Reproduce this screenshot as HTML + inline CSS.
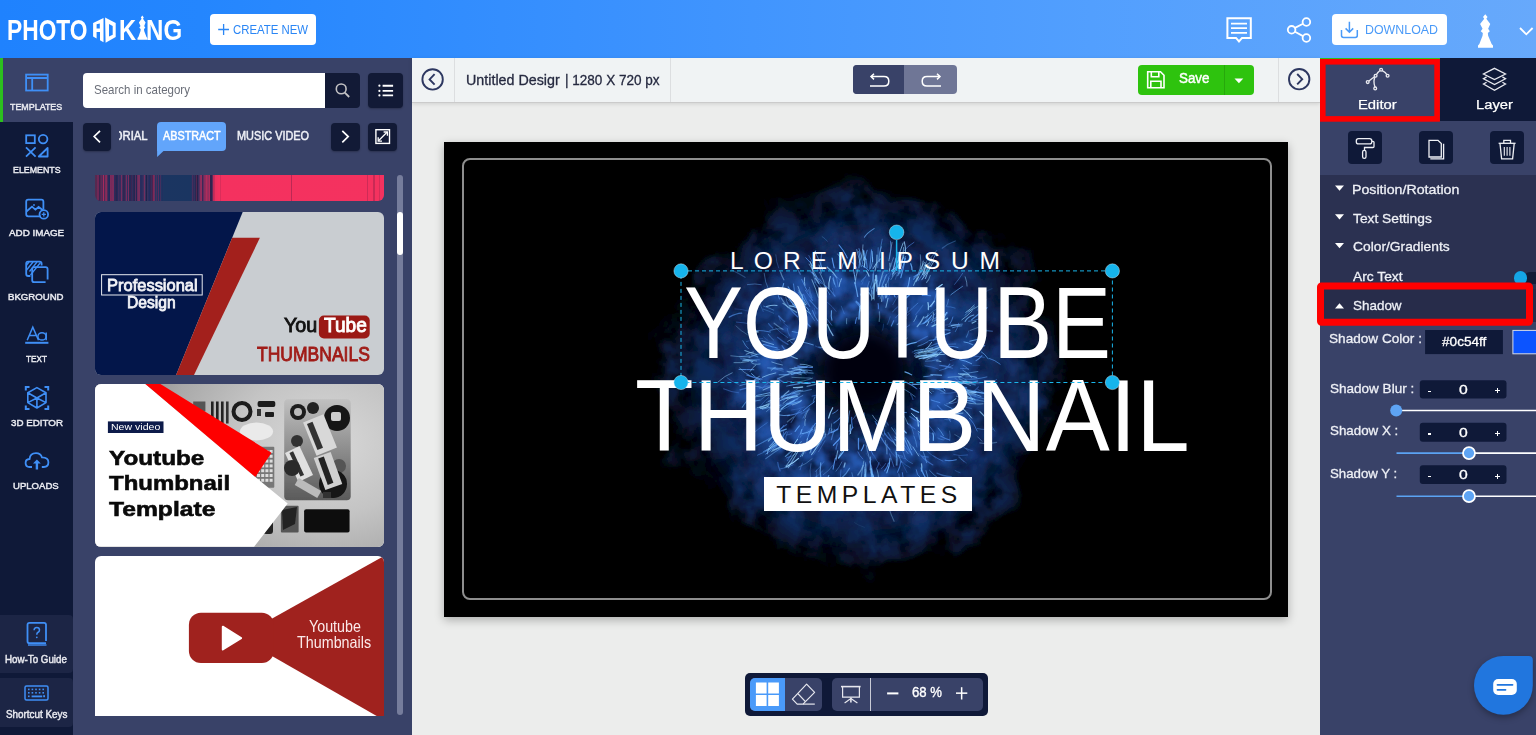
<!DOCTYPE html><html><head><meta charset="utf-8"><style>
*{box-sizing:border-box;margin:0;padding:0}
html,body{width:1536px;height:735px;overflow:hidden;font-family:"Liberation Sans",sans-serif;background:#ebeced}
.abs{position:absolute}
.t{white-space:nowrap;line-height:1}
svg{position:absolute;overflow:visible}
</style></head><body>
<div class="abs" style="left:0;top:0;width:1536px;height:58px;background:linear-gradient(90deg,#1f82fe 0%,#2486fe 13%,#3a91fe 40%,#529ffe 71%,#67a9fb 100%)"></div>
<div class="abs t" style="left:7.48px;top:14.65px;font-size:30.09px;font-weight:700;color:#fff;letter-spacing:0px;transform:scaleX(0.7569);transform-origin:0 0;">PHOTO</div>
<svg style="left:0;top:0" width="1536" height="58"><g fill="#fff"><path fill-rule="evenodd" d="M93.1 23.1 L103.5 18 L103.5 42.3 L100 40.2 L100 32 L96.6 32 L96.6 38.6 L93.1 36.5 Z M96.6 24.2 L99.8 23.6 L99.8 28.5 L96.6 28.5 Z"/><path fill-rule="evenodd" d="M105.1 17.5 L115.7 23.1 L115.7 37 L105.6 42.8 Z M109 24 L112.7 25.9 L112.7 34.7 L109 36.5 Z"/><path fill="#fff" d="M142.30 15.50 L143.80 17.50 L143.00 18.80 L145.60 22.60 L144.20 25.90 L145.30 27.70 L144.00 29.00 L144.20 31.00 L146.50 37.00 L147.40 38.00 L147.40 39.70 L137.50 39.70 L137.50 38.00 L138.40 37.00 L140.50 31.00 L140.70 29.00 L139.30 27.70 L140.50 25.90 L138.90 22.60 L141.60 18.80 L140.80 17.50 Z"/></g></svg>
<div class="abs t" style="left:118.72px;top:14.55px;font-size:29.51px;font-weight:700;color:#fff;letter-spacing:0px;transform:scaleX(0.8027);transform-origin:0 0;">K</div>
<div class="abs t" style="left:146.39px;top:14.55px;font-size:29.51px;font-weight:700;color:#fff;letter-spacing:0px;transform:scaleX(0.8157);transform-origin:0 0;">NG</div>
<div class="abs" style="left:210px;top:14px;width:106px;height:31px;background:#fff;border-radius:4px"></div>
<svg style="left:0;top:0" width="400" height="58"><path d="M223.6 24 V35 M218.2 29.5 H229" stroke="#2a86f5" stroke-width="1.3"/></svg>
<div class="abs t" style="left:232.82px;top:23.73px;font-size:12.94px;font-weight:400;color:#2a86f5;letter-spacing:0px;transform:scaleX(0.8808);transform-origin:0 0;">CREATE NEW</div>
<svg style="left:0;top:0" width="1536" height="58"><g fill="none" stroke="#fff" stroke-width="2"><path d="M1227.4 18.3 H1250.8 V37.9 H1242 L1239 41.4 L1236 37.9 H1227.4 Z"/><path d="M1231 23.7 H1247 M1231 28.1 H1247 M1231 32.8 H1247" stroke-width="1.7"/><circle cx="1306.4" cy="22" r="3.8" stroke-width="1.8"/><circle cx="1291.6" cy="29.8" r="3.8" stroke-width="1.8"/><circle cx="1306.4" cy="38" r="3.8" stroke-width="1.8"/><path d="M1295 27.9 L1303 23.8 M1295 31.8 L1303 36.1" stroke-width="1.8"/><path d="M1520 28 L1526.3 34.3 L1532.6 28" stroke-width="1.8"/></g></svg>
<div class="abs" style="left:1332px;top:14px;width:115px;height:31px;background:#fff;border-radius:4px"></div>
<svg style="left:0;top:0" width="1536" height="58"><g fill="none" stroke="#4a9af8" stroke-width="1.5"><path d="M1349.4 21.7 V32 M1345.6 28.4 L1349.4 32.2 L1353.2 28.4"/><path d="M1341.5 30 V35.5 Q1341.5 37.4 1343.5 37.4 H1355.3 Q1357.3 37.4 1357.3 35.5 V30"/></g><path fill="#fff" d="M1485.27 14.20 L1487.55 16.98 L1486.33 18.78 L1490.27 24.06 L1488.15 28.64 L1489.82 31.14 L1487.85 32.94 L1488.15 35.72 L1491.64 44.05 L1493.00 45.44 L1493.00 47.80 L1478.00 47.80 L1478.00 45.44 L1479.36 44.05 L1482.55 35.72 L1482.85 32.94 L1480.73 31.14 L1482.55 28.64 L1480.12 24.06 L1484.21 18.78 L1483.00 16.98 Z"/></svg>
<div class="abs t" style="left:1365.18px;top:24.03px;font-size:12.94px;font-weight:400;color:#4a9af8;letter-spacing:0px;transform:scaleX(0.9584);transform-origin:0 0;">DOWNLOAD</div>
<div class="abs" style="left:0;top:58px;width:73px;height:677px;background:#0f1938"></div>
<div class="abs" style="left:0;top:58px;width:73px;height:64px;background:#394268"></div>
<div class="abs" style="left:0;top:58px;width:3px;height:64px;background:#2cc01e"></div>
<div class="abs" style="left:0;top:615px;width:73px;height:58px;background:#1c2545;border-radius:0 4px 4px 0"></div>
<div class="abs" style="left:0;top:678px;width:73px;height:49px;background:#1c2545;border-radius:0 4px 4px 0"></div>
<svg style="left:0;top:0" width="80" height="735"><g fill="none" stroke="#3f8ff6" stroke-width="1.8"><rect x="26.1" y="74.6" width="21.6" height="15.9"/><path d="M26.1 78 H47.7 M32.2 78 V90.5"/><rect x="26.2" y="135.3" width="8.6" height="7.8"/><circle cx="43.1" cy="139.1" r="4.3"/><path d="M26 147.3 L35.6 156.6 M35.6 147.3 L26 156.6"/><path d="M47.6 148 V156.5 H38.8 Z" stroke-linejoin="round"/><path d="M41 216.3 H28.2 Q26.2 216.3 26.2 214.3 V201.7 Q26.2 199.7 28.2 199.7 H41.4 Q43.4 199.7 43.4 201.7 V209.6"/><path d="M26.4 211.5 L32 206.6 L35.4 209.6 L38.6 207 L43 210.2" /><circle cx="34" cy="205" r="0.9" fill="#3f8ff6" stroke="none"/><circle cx="43.8" cy="214.4" r="4.3"/><path d="M43.8 212.3 V216.5 M41.7 214.4 H45.9" stroke-width="1.3"/><path d="M41.6 265.4 V263.6 Q41.6 261.6 39.6 261.6 H28.2 Q26.2 261.6 26.2 263.6 V274 Q26.2 276 28.2 276 H30.4"/><path d="M29 262 L26.6 265 M33 262 L26.6 270 M37 262 L29.5 271.5 M40.5 262.5 L30.5 275" stroke-width="1.3"/><path d="M47.6 279.5 V269.2 Q47.6 267.2 45.6 267.2 H34.2 Q32.2 267.2 32.2 269.2 V280.2 Q32.2 282.2 34.2 282.2 H45.6"/><path d="M27.2 340.2 L32.8 327.2 L38.5 340.2 M29.3 335.4 H36.3" stroke-width="1.5"/><ellipse cx="42" cy="336.4" rx="4.1" ry="3.7" stroke-width="1.5"/><path d="M46.2 332.6 V340.2" stroke-width="1.5"/><path d="M25.2 342.8 H48.4" stroke-width="2"/><path d="M25.8 390.5 V387 H29.5 M44.5 387 H48.2 V390.5 M48.2 405.5 V409 H44.5 M29.5 409 H25.8 V405.5" stroke-width="2"/><path d="M36.9 387.6 L46 392.8 V402.6 L36.9 408 L27.8 402.6 V392.8 Z M27.8 392.8 L36.9 398 L46 392.8 M36.9 398 V408 M27.8 402.6 L36.9 398 L46 402.6" stroke-width="1.6" stroke-linejoin="round"/><path d="M32 467 H29.5 Q25.6 467 25.6 463 Q25.6 459.2 29.6 459 Q30 453.2 36 453.2 Q40.7 453.2 42 457.4 Q48.4 457.6 48.4 462.3 Q48.4 467 43.8 467 H41.8" stroke-width="1.8"/><path d="M36.9 469.5 V462.5" stroke-width="2.4"/><path d="M33 463.6 L36.9 459.5 L40.8 463.6 Z" fill="#3f8ff6" stroke="none"/><path d="M46 643.2 H29.5 Q27.5 643.2 27.5 641.2 V624.8 Q27.5 622.8 29.5 622.8 H44 Q46 622.8 46 624.8 V641" stroke-width="1.8"/><path d="M28 645 H46.5" stroke-width="1.4"/><path d="M34.1 630.3 Q34.1 627.4 36.8 627.4 Q39.5 627.4 39.5 630 Q39.5 631.7 37.8 632.5 Q36.8 633.1 36.8 634.7" stroke-width="1.5"/><circle cx="36.8" cy="637.3" r="0.9" fill="#3f8ff6" stroke="none"/><rect x="25" y="686.1" width="23" height="13.8" rx="1.5" stroke-width="1.5"/></g><g fill="#3f8ff6"><rect x="28.0" y="688.6" width="1.6" height="1.6"/><rect x="31.6" y="688.6" width="1.6" height="1.6"/><rect x="35.2" y="688.6" width="1.6" height="1.6"/><rect x="38.8" y="688.6" width="1.6" height="1.6"/><rect x="42.4" y="688.6" width="1.6" height="1.6"/><rect x="28.0" y="692.0" width="1.6" height="1.6"/><rect x="31.6" y="692.0" width="1.6" height="1.6"/><rect x="35.2" y="692.0" width="1.6" height="1.6"/><rect x="38.8" y="692.0" width="1.6" height="1.6"/><rect x="42.4" y="692.0" width="1.6" height="1.6"/><rect x="28" y="695.5" width="1.6" height="1.6"/><rect x="31.6" y="695.5" width="10.6" height="1.8"/><rect x="43.2" y="695.2" width="1.8" height="2"/></g></svg>
<div class="abs t" style="left:10.40px;top:102.45px;font-size:9.59px;font-weight:400;color:#e9eaf0;letter-spacing:0px;transform:scaleX(0.9286);transform-origin:0 0;-webkit-text-stroke:0.45px #e9eaf0;">TEMPLATES</div>
<div class="abs t" style="left:12.58px;top:165.20px;font-size:9.74px;font-weight:400;color:#e9eaf0;letter-spacing:0px;transform:scaleX(0.9054);transform-origin:0 0;-webkit-text-stroke:0.45px #e9eaf0;">ELEMENTS</div>
<div class="abs t" style="left:8.78px;top:228.25px;font-size:9.59px;font-weight:400;color:#e9eaf0;letter-spacing:0px;transform:scaleX(1.0261);transform-origin:0 0;-webkit-text-stroke:0.45px #e9eaf0;">ADD IMAGE</div>
<div class="abs t" style="left:8.41px;top:291.55px;font-size:9.59px;font-weight:400;color:#e9eaf0;letter-spacing:0px;transform:scaleX(1.0039);transform-origin:0 0;-webkit-text-stroke:0.45px #e9eaf0;">BKGROUND</div>
<div class="abs t" style="left:26.02px;top:354.45px;font-size:9.88px;font-weight:400;color:#e9eaf0;letter-spacing:0px;transform:scaleX(0.8303);transform-origin:0 0;-webkit-text-stroke:0.45px #e9eaf0;">TEXT</div>
<div class="abs t" style="left:10.63px;top:417.65px;font-size:9.88px;font-weight:400;color:#e9eaf0;letter-spacing:0px;transform:scaleX(0.9902);transform-origin:0 0;-webkit-text-stroke:0.45px #e9eaf0;">3D EDITOR</div>
<div class="abs t" style="left:13.36px;top:480.75px;font-size:9.59px;font-weight:400;color:#e9eaf0;letter-spacing:0px;transform:scaleX(0.9985);transform-origin:0 0;-webkit-text-stroke:0.45px #e9eaf0;">UPLOADS</div>
<div class="abs t" style="left:5.40px;top:654.48px;font-size:10.76px;font-weight:400;color:#e9eaf0;letter-spacing:0px;transform:scaleX(0.9088);transform-origin:0 0;-webkit-text-stroke:0.45px #e9eaf0;">How-To Guide</div>
<div class="abs t" style="left:5.75px;top:709.38px;font-size:10.76px;font-weight:400;color:#e9eaf0;letter-spacing:0px;transform:scaleX(0.9186);transform-origin:0 0;-webkit-text-stroke:0.45px #e9eaf0;">Shortcut Keys</div>
<div class="abs" style="left:73px;top:58px;width:339px;height:677px;background:#394268"></div>
<div class="abs" style="left:82.5px;top:73px;width:243px;height:34.7px;background:#fff;border-radius:4px 0 0 4px"></div>
<div class="abs t" style="left:93.78px;top:85.08px;font-size:11.92px;font-weight:400;color:#6a6e78;letter-spacing:0px;transform:scaleX(0.9665);transform-origin:0 0;">Search in category</div>
<div class="abs" style="left:325.4px;top:73px;width:34.6px;height:34.7px;background:#121a36;border-radius:0 4px 4px 0"></div>
<div class="abs" style="left:368px;top:73px;width:34.6px;height:34.7px;background:#121a36;border-radius:4px;box-shadow:0 1px 2px rgba(0,0,0,.25)"></div>
<div class="abs" style="left:83.1px;top:122.6px;width:27.9px;height:28.5px;background:#121a36;border-radius:4px;box-shadow:0 1px 2px rgba(0,0,0,.25)"></div>
<div class="abs" style="left:331.2px;top:122.6px;width:28.5px;height:28.5px;background:#121a36;border-radius:4px;box-shadow:0 1px 2px rgba(0,0,0,.25)"></div>
<div class="abs" style="left:368.0px;top:122.6px;width:28.8px;height:28.5px;background:#121a36;border-radius:4px;box-shadow:0 1px 2px rgba(0,0,0,.25)"></div>
<div class="abs" style="left:157.1px;top:122.2px;width:68.7px;height:29.3px;background:#62a5fb;border-radius:4px 4px 4px 0"></div>
<svg style="left:0;top:0" width="412" height="200"><path d="M157.1 151 V157 L163.5 151 Z" fill="#62a5fb"/><g fill="none" stroke="#fff" stroke-width="1.7"><path d="M100 130.8 L94.2 136.5 L100 142.3"/><path d="M342.3 130.8 L348.2 136.6 L342.3 142.4"/><rect x="375.9" y="129.7" width="13.6" height="13.7" stroke-width="1.4"/><path d="M378.5 140.8 L387 132.3" stroke-width="1.3"/><path d="M383.6 132 H387.4 V135.8 M378.2 137.3 V141.1 H382" stroke-width="1.3"/><circle cx="341.2" cy="88.9" r="4.9" stroke="#c3c2c4" stroke-width="1.6"/><path d="M344.8 92.6 L349.2 97" stroke="#c3c2c4" stroke-width="1.8"/><path d="M382.6 85.7 H393.1 M382.6 90.9 H393.1 M382.6 95.4 H393.1" stroke-width="1.9"/></g><g fill="#fff"><circle cx="379.4" cy="85.7" r="1.1"/><circle cx="379.4" cy="90.9" r="1.1"/><circle cx="379.4" cy="95.4" r="1.1"/></g></svg>
<div class="abs" style="left:118.75px;top:120px;width:30px;height:30px;overflow:hidden"><div class="abs t" style="left:-27.09px;top:9.94px;font-size:12.40px;font-weight:400;color:#eef0f6;letter-spacing:0px;transform:scaleX(0.9103);transform-origin:0 0;-webkit-text-stroke:0.50px #eef0f6;">TUTORIAL</div></div>
<div class="abs t" style="left:163.28px;top:129.94px;font-size:12.40px;font-weight:400;color:#fff;letter-spacing:0px;transform:scaleX(0.8734);transform-origin:0 0;-webkit-text-stroke:0.50px #fff;">ABSTRACT</div>
<div class="abs t" style="left:236.61px;top:130.24px;font-size:12.40px;font-weight:400;color:#eef0f6;letter-spacing:0px;transform:scaleX(0.8796);transform-origin:0 0;-webkit-text-stroke:0.50px #eef0f6;">MUSIC VIDEO</div>
<div class="abs" style="left:396.9px;top:174.6px;width:6px;height:540.8px;background:#767d9c;border-radius:3px"></div>
<div class="abs" style="left:396.9px;top:212.3px;width:6px;height:42.6px;background:#fff;border-radius:3px"></div>
<div class="abs" style="left:95.1px;top:174.6px;width:289.1px;height:541.1px;overflow:hidden"><div class="abs" style="left:0;top:0;width:289.1px;height:26.7px;overflow:hidden;border-radius:0 0 6px 6px;background:linear-gradient(90deg,#56294f 0%,#4a2b58 5%,#3c2f5e 10%,#40305e 16%,#2a3461 21%,#1b3561 24%,#1a3561 33%,#3a2f5d 35%,#8a2c5b 38%,#e4315f 41%,#f4315f 43%,#f4325f 100%)"><div class="abs" style="left:3.4px;top:0;width:1.1px;height:27px;background:rgba(30,45,95,.45)"></div><div class="abs" style="left:13.4px;top:0;width:1.1px;height:27px;background:rgba(30,45,95,.45)"></div><div class="abs" style="left:44.9px;top:0;width:0.6px;height:27px;background:rgba(30,45,95,.45)"></div><div class="abs" style="left:1.5px;top:0;width:0.8px;height:27px;background:rgba(120,40,90,.4)"></div><div class="abs" style="left:21.5px;top:0;width:1.6px;height:27px;background:rgba(15,25,60,.35)"></div><div class="abs" style="left:18.8px;top:0;width:1.5px;height:27px;background:rgba(30,45,95,.45)"></div><div class="abs" style="left:15.6px;top:0;width:1.8px;height:27px;background:rgba(200,45,95,.4)"></div><div class="abs" style="left:24.7px;top:0;width:0.8px;height:27px;background:rgba(30,45,95,.45)"></div><div class="abs" style="left:102.9px;top:0;width:0.9px;height:27px;background:rgba(30,45,95,.45)"></div><div class="abs" style="left:63.6px;top:0;width:1.4px;height:27px;background:rgba(30,45,95,.45)"></div><div class="abs" style="left:21.4px;top:0;width:1.8px;height:27px;background:rgba(30,45,95,.45)"></div><div class="abs" style="left:114.1px;top:0;width:1.7px;height:27px;background:rgba(120,40,90,.4)"></div><div class="abs" style="left:2.5px;top:0;width:1.0px;height:27px;background:rgba(30,45,95,.45)"></div><div class="abs" style="left:31.1px;top:0;width:0.9px;height:27px;background:rgba(200,45,95,.4)"></div><div class="abs" style="left:7.8px;top:0;width:1.0px;height:27px;background:rgba(120,40,90,.4)"></div><div class="abs" style="left:56.7px;top:0;width:0.9px;height:27px;background:rgba(15,25,60,.35)"></div><div class="abs" style="left:55.8px;top:0;width:0.7px;height:27px;background:rgba(120,40,90,.4)"></div><div class="abs" style="left:115.1px;top:0;width:0.5px;height:27px;background:rgba(120,40,90,.4)"></div><div class="abs" style="left:99.7px;top:0;width:0.5px;height:27px;background:rgba(15,25,60,.35)"></div><div class="abs" style="left:43.2px;top:0;width:1.3px;height:27px;background:rgba(200,45,95,.4)"></div><div class="abs" style="left:53.4px;top:0;width:1.4px;height:27px;background:rgba(30,45,95,.45)"></div><div class="abs" style="left:14.0px;top:0;width:0.8px;height:27px;background:rgba(15,25,60,.35)"></div><div class="abs" style="left:40.6px;top:0;width:1.0px;height:27px;background:rgba(120,40,90,.4)"></div><div class="abs" style="left:101.4px;top:0;width:0.5px;height:27px;background:rgba(200,45,95,.4)"></div><div class="abs" style="left:24.6px;top:0;width:1.2px;height:27px;background:rgba(120,40,90,.4)"></div><div class="abs" style="left:108.3px;top:0;width:0.9px;height:27px;background:rgba(200,45,95,.4)"></div><div class="abs" style="left:36.9px;top:0;width:0.9px;height:27px;background:rgba(30,45,95,.45)"></div><div class="abs" style="left:57.1px;top:0;width:1.4px;height:27px;background:rgba(200,45,95,.4)"></div><div class="abs" style="left:116.4px;top:0;width:1.2px;height:27px;background:rgba(15,25,60,.35)"></div><div class="abs" style="left:3.8px;top:0;width:1.5px;height:27px;background:rgba(120,40,90,.4)"></div><div class="abs" style="left:97.5px;top:0;width:1.1px;height:27px;background:rgba(15,25,60,.35)"></div><div class="abs" style="left:17.2px;top:0;width:1.8px;height:27px;background:rgba(200,45,95,.4)"></div><div class="abs" style="left:24.4px;top:0;width:1.8px;height:27px;background:rgba(30,45,95,.45)"></div><div class="abs" style="left:12.6px;top:0;width:1.1px;height:27px;background:rgba(30,45,95,.45)"></div><div class="abs" style="left:6.9px;top:0;width:1.0px;height:27px;background:rgba(30,45,95,.45)"></div><div class="abs" style="left:53.5px;top:0;width:1.8px;height:27px;background:rgba(30,45,95,.45)"></div><div class="abs" style="left:115.2px;top:0;width:1.1px;height:27px;background:rgba(15,25,60,.35)"></div><div class="abs" style="left:32.3px;top:0;width:1.1px;height:27px;background:rgba(30,45,95,.45)"></div><div class="abs" style="left:13.3px;top:0;width:1.6px;height:27px;background:rgba(30,45,95,.45)"></div><div class="abs" style="left:39.9px;top:0;width:0.6px;height:27px;background:rgba(120,40,90,.4)"></div><div class="abs" style="left:60.8px;top:0;width:1.2px;height:27px;background:rgba(120,40,90,.4)"></div><div class="abs" style="left:7.4px;top:0;width:1.5px;height:27px;background:rgba(120,40,90,.4)"></div><div class="abs" style="left:57.3px;top:0;width:1.5px;height:27px;background:rgba(120,40,90,.4)"></div><div class="abs" style="left:112.9px;top:0;width:0.9px;height:27px;background:rgba(30,45,95,.45)"></div><div class="abs" style="left:64.5px;top:0;width:0.8px;height:27px;background:rgba(120,40,90,.4)"></div><div class="abs" style="left:54.6px;top:0;width:1.6px;height:27px;background:rgba(120,40,90,.4)"></div><div class="abs" style="left:41.1px;top:0;width:1.3px;height:27px;background:rgba(15,25,60,.35)"></div><div class="abs" style="left:41.3px;top:0;width:1.6px;height:27px;background:rgba(15,25,60,.35)"></div><div class="abs" style="left:115.2px;top:0;width:1.7px;height:27px;background:rgba(30,45,95,.45)"></div><div class="abs" style="left:62.5px;top:0;width:0.7px;height:27px;background:rgba(120,40,90,.4)"></div><div class="abs" style="left:110.6px;top:0;width:1.1px;height:27px;background:rgba(200,45,95,.4)"></div><div class="abs" style="left:20.3px;top:0;width:1.5px;height:27px;background:rgba(15,25,60,.35)"></div><div class="abs" style="left:35.7px;top:0;width:1.2px;height:27px;background:rgba(120,40,90,.4)"></div><div class="abs" style="left:18.9px;top:0;width:1.1px;height:27px;background:rgba(30,45,95,.45)"></div><div class="abs" style="left:25.8px;top:0;width:1.4px;height:27px;background:rgba(200,45,95,.4)"></div><div class="abs" style="left:116.4px;top:0;width:1.8px;height:27px;background:rgba(30,45,95,.45)"></div><div class="abs" style="left:6.4px;top:0;width:0.7px;height:27px;background:rgba(120,40,90,.4)"></div><div class="abs" style="left:114.2px;top:0;width:1.1px;height:27px;background:rgba(200,45,95,.4)"></div><div class="abs" style="left:49.0px;top:0;width:1.0px;height:27px;background:rgba(200,45,95,.4)"></div><div class="abs" style="left:106.6px;top:0;width:0.5px;height:27px;background:rgba(15,25,60,.35)"></div><div class="abs" style="left:112.3px;top:0;width:1.6px;height:27px;background:rgba(200,45,95,.4)"></div><div class="abs" style="left:113.8px;top:0;width:1.2px;height:27px;background:rgba(120,40,90,.4)"></div><div class="abs" style="left:11.2px;top:0;width:1.2px;height:27px;background:rgba(120,40,90,.4)"></div><div class="abs" style="left:112.2px;top:0;width:0.9px;height:27px;background:rgba(120,40,90,.4)"></div><div class="abs" style="left:96.6px;top:0;width:1.0px;height:27px;background:rgba(120,40,90,.4)"></div><div class="abs" style="left:55.2px;top:0;width:0.7px;height:27px;background:rgba(15,25,60,.35)"></div><div class="abs" style="left:66.5px;top:0;width:1.7px;height:27px;background:rgba(30,45,95,.45)"></div><div class="abs" style="left:105.4px;top:0;width:0.5px;height:27px;background:rgba(200,45,95,.4)"></div><div class="abs" style="left:38.5px;top:0;width:1.7px;height:27px;background:rgba(30,45,95,.45)"></div><div class="abs" style="left:38.4px;top:0;width:1.6px;height:27px;background:rgba(15,25,60,.35)"></div><div class="abs" style="left:50.6px;top:0;width:1.8px;height:27px;background:rgba(15,25,60,.35)"></div><div class="abs" style="left:34.4px;top:0;width:1.8px;height:27px;background:rgba(15,25,60,.35)"></div><div class="abs" style="left:45.3px;top:0;width:1.6px;height:27px;background:rgba(30,45,95,.45)"></div><div class="abs" style="left:115.8px;top:0;width:1.1px;height:27px;background:rgba(15,25,60,.35)"></div><div class="abs" style="left:2.3px;top:0;width:1.7px;height:27px;background:rgba(120,40,90,.4)"></div><div class="abs" style="left:58.0px;top:0;width:0.9px;height:27px;background:rgba(15,25,60,.35)"></div><div class="abs" style="left:2.8px;top:0;width:1.4px;height:27px;background:rgba(15,25,60,.35)"></div><div class="abs" style="left:29.0px;top:0;width:0.6px;height:27px;background:rgba(30,45,95,.45)"></div><div class="abs" style="left:97.6px;top:0;width:0.5px;height:27px;background:rgba(120,40,90,.4)"></div><div class="abs" style="left:28.7px;top:0;width:1.1px;height:27px;background:rgba(200,45,95,.4)"></div><div class="abs" style="left:29.0px;top:0;width:0.8px;height:27px;background:rgba(30,45,95,.45)"></div><div class="abs" style="left:58.1px;top:0;width:1.8px;height:27px;background:rgba(200,45,95,.4)"></div><div class="abs" style="left:1.9px;top:0;width:0.7px;height:27px;background:rgba(120,40,90,.4)"></div><div class="abs" style="left:63.0px;top:0;width:0.9px;height:27px;background:rgba(120,40,90,.4)"></div><div class="abs" style="left:41.3px;top:0;width:1.4px;height:27px;background:rgba(30,45,95,.45)"></div><div class="abs" style="left:4.3px;top:0;width:0.8px;height:27px;background:rgba(15,25,60,.35)"></div><div class="abs" style="left:50.7px;top:0;width:1.5px;height:27px;background:rgba(15,25,60,.35)"></div><div class="abs" style="left:101.3px;top:0;width:1.6px;height:27px;background:rgba(15,25,60,.35)"></div><div class="abs" style="left:46.2px;top:0;width:1.6px;height:27px;background:rgba(30,45,95,.45)"></div><div class="abs" style="left:106.1px;top:0;width:1.1px;height:27px;background:rgba(200,45,95,.4)"></div><div class="abs" style="left:35.8px;top:0;width:0.5px;height:27px;background:rgba(15,25,60,.35)"></div><div class="abs" style="left:55.7px;top:0;width:0.9px;height:27px;background:rgba(30,45,95,.45)"></div><div class="abs" style="left:56.5px;top:0;width:1.2px;height:27px;background:rgba(15,25,60,.35)"></div><div class="abs" style="left:114.8px;top:0;width:1.2px;height:27px;background:rgba(15,25,60,.35)"></div><div class="abs" style="left:8.1px;top:0;width:0.8px;height:27px;background:rgba(200,45,95,.4)"></div><div class="abs" style="left:3.0px;top:0;width:1.4px;height:27px;background:rgba(200,45,95,.4)"></div><div class="abs" style="left:117.8px;top:0;width:1.4px;height:27px;background:rgba(200,45,95,.4)"></div><div class="abs" style="left:14.6px;top:0;width:0.7px;height:27px;background:rgba(200,45,95,.4)"></div><div class="abs" style="left:34.5px;top:0;width:1.7px;height:27px;background:rgba(30,45,95,.45)"></div><div class="abs" style="left:21.6px;top:0;width:0.7px;height:27px;background:rgba(30,45,95,.45)"></div><div class="abs" style="left:7.9px;top:0;width:0.8px;height:27px;background:rgba(200,45,95,.4)"></div><div class="abs" style="left:33.0px;top:0;width:1.2px;height:27px;background:rgba(200,45,95,.4)"></div><div class="abs" style="left:15.9px;top:0;width:1.1px;height:27px;background:rgba(120,40,90,.4)"></div><div class="abs" style="left:41.7px;top:0;width:1.4px;height:27px;background:rgba(200,45,95,.4)"></div><div class="abs" style="left:16.3px;top:0;width:0.9px;height:27px;background:rgba(120,40,90,.4)"></div><div class="abs" style="left:107.4px;top:0;width:1.2px;height:27px;background:rgba(30,45,95,.45)"></div><div class="abs" style="left:31.1px;top:0;width:1.2px;height:27px;background:rgba(120,40,90,.4)"></div><div class="abs" style="left:98.2px;top:0;width:0.9px;height:27px;background:rgba(30,45,95,.45)"></div><div class="abs" style="left:53.5px;top:0;width:1.0px;height:27px;background:rgba(30,45,95,.45)"></div><div class="abs" style="left:10.1px;top:0;width:1.4px;height:27px;background:rgba(200,45,95,.4)"></div><div class="abs" style="left:101.9px;top:0;width:1.2px;height:27px;background:rgba(15,25,60,.35)"></div><div class="abs" style="left:28.2px;top:0;width:1.6px;height:27px;background:rgba(15,25,60,.35)"></div><div class="abs" style="left:113.7px;top:0;width:0.6px;height:27px;background:rgba(200,45,95,.4)"></div><div class="abs" style="left:118.0px;top:0;width:1.5px;height:27px;background:rgba(120,30,70,0.25)"></div><div class="abs" style="left:125.0px;top:0;width:1.0px;height:27px;background:rgba(120,30,70,0.20)"></div><div class="abs" style="left:195.5px;top:0;width:1.6px;height:27px;background:rgba(120,30,70,0.45)"></div><div class="abs" style="left:272.0px;top:0;width:1.2px;height:27px;background:rgba(120,30,70,0.30)"></div><div class="abs" style="left:278.0px;top:0;width:2.0px;height:27px;background:rgba(120,30,70,0.35)"></div><div class="abs" style="left:284.0px;top:0;width:1.0px;height:27px;background:rgba(120,30,70,0.25)"></div></div><div class="abs" style="left:0;top:37.0px;width:289.1px;height:163px;border-radius:6px;overflow:hidden;background:#c9cdd1"><svg style="left:0;top:0" width="289" height="163"><path d="M0 0 H147.7 L81.1 163 H0 Z" fill="#03164a"/><path d="M137.2 25.8 H164.9 L99.0 163 H81.1 Z" fill="#a3201c"/><rect x="6.6" y="62.7" width="100.6" height="20.3" fill="none" stroke="#e8eaf0" stroke-width="1"/><rect x="223.9" y="103.6" width="50.8" height="22.8" rx="5" fill="#9b1915"/></svg><div class="abs t" style="left:12.05px;top:66.28px;font-size:16.72px;font-weight:400;color:#f2f3f7;letter-spacing:0px;transform:scaleX(0.9866);transform-origin:0 0;-webkit-text-stroke:0.80px #f2f3f7;">Professional</div><div class="abs t" style="left:31.71px;top:82.37px;font-size:16.13px;font-weight:400;color:#f2f3f7;letter-spacing:0px;transform:scaleX(0.9718);transform-origin:0 0;-webkit-text-stroke:0.80px #f2f3f7;">Design</div><div class="abs t" style="left:188.47px;top:103.75px;font-size:20.49px;font-weight:400;color:#111;letter-spacing:0px;transform:scaleX(0.9642);transform-origin:0 0;-webkit-text-stroke:0.90px #111;">You</div><div class="abs t" style="left:228.47px;top:103.75px;font-size:20.49px;font-weight:400;color:#fff;letter-spacing:0px;transform:scaleX(0.9331);transform-origin:0 0;-webkit-text-stroke:0.90px #fff;">Tube</div><div class="abs t" style="left:161.71px;top:132.15px;font-size:20.49px;font-weight:400;color:#a01c18;letter-spacing:0px;transform:scaleX(0.8547);transform-origin:0 0;-webkit-text-stroke:0.90px #a01c18;">THUMBNAILS</div></div><div class="abs" style="left:0;top:209.6px;width:289.1px;height:162.8px;border-radius:6px;overflow:hidden;background:#fff"><div class="abs" style="left:0;top:0;width:289.1px;height:162.8px;background:radial-gradient(ellipse 200px 160px at 230px 60px,#d9d9d9 0%,#c4c4c4 45%,#a9a9a9 80%,#8f8f8f 100%)"></div><svg style="left:0;top:0" width="289" height="163"><defs><linearGradient id="lap" x1="0" y1="0" x2="0" y2="1"><stop offset="0" stop-color="#c0c0c0"/><stop offset="1" stop-color="#5a5a5a"/></linearGradient><filter id="pb"><feGaussianBlur stdDeviation="0.7"/></filter></defs><g filter="url(#pb)"><rect x="189.2" y="15.3" width="66.5" height="101" rx="4" fill="url(#lap)"/><circle cx="203" cy="28" r="8" fill="#1a1a1a"/><circle cx="203" cy="28" r="4" fill="#bbb"/><circle cx="218" cy="24" r="6" fill="#222"/><circle cx="242" cy="34" r="13" fill="#151515"/><rect x="236" y="28" width="10" height="9" rx="2" fill="#ccc"/><rect x="214" y="33" width="22" height="36" fill="#d8d8d8" transform="rotate(-22 225 51)"/><rect x="217" y="36" width="6" height="28" fill="#333" transform="rotate(-22 225 51)"/><circle cx="202" cy="57" r="6" fill="#333"/><rect x="196" y="64" width="16" height="32" fill="#e0e0e0" transform="rotate(-25 204 80)"/><rect x="200" y="66" width="4" height="26" fill="#333" transform="rotate(-25 204 80)"/><circle cx="197" cy="84" r="8" fill="#2b2b2b"/><circle cx="244" cy="82" r="7" fill="#555"/><circle cx="238" cy="100" r="14" fill="#141414"/><rect x="224" y="70" width="18" height="34" fill="#d0d0d0" transform="rotate(-20 233 87)"/><rect x="228" y="72" width="6" height="28" fill="#222" transform="rotate(-20 233 87)"/><rect x="200" y="100" width="26" height="8" fill="#bbb" transform="rotate(30 213 104)"/><rect x="228" y="108" width="8" height="6" fill="#333"/><rect x="209.1" y="125.2" width="45.5" height="23.3" rx="2" fill="#111"/><rect x="185.9" y="121.8" width="17.7" height="26.7" rx="1" fill="#555"/><path d="M187 126 L202 123 L200 140 L188 146 Z" fill="#222"/><rect x="168" y="132" width="10" height="18" rx="3" fill="#222"/><rect x="160.3" y="62.8" width="19" height="41" rx="1" fill="#777"/><rect x="162.0" y="66.0" width="3" height="3" fill="#ddd"/><rect x="162.0" y="70.8" width="3" height="3" fill="#ddd"/><rect x="162.0" y="75.6" width="3" height="3" fill="#ddd"/><rect x="162.0" y="80.4" width="3" height="3" fill="#ddd"/><rect x="162.0" y="85.2" width="3" height="3" fill="#ddd"/><rect x="162.0" y="90.0" width="3" height="3" fill="#ddd"/><rect x="162.0" y="94.8" width="3" height="3" fill="#ddd"/><rect x="166.2" y="66.0" width="3" height="3" fill="#ddd"/><rect x="166.2" y="70.8" width="3" height="3" fill="#ddd"/><rect x="166.2" y="75.6" width="3" height="3" fill="#ddd"/><rect x="166.2" y="80.4" width="3" height="3" fill="#ddd"/><rect x="166.2" y="85.2" width="3" height="3" fill="#ddd"/><rect x="166.2" y="90.0" width="3" height="3" fill="#ddd"/><rect x="166.2" y="94.8" width="3" height="3" fill="#ddd"/><rect x="170.4" y="66.0" width="3" height="3" fill="#ddd"/><rect x="170.4" y="70.8" width="3" height="3" fill="#ddd"/><rect x="170.4" y="75.6" width="3" height="3" fill="#ddd"/><rect x="170.4" y="80.4" width="3" height="3" fill="#ddd"/><rect x="170.4" y="85.2" width="3" height="3" fill="#ddd"/><rect x="170.4" y="90.0" width="3" height="3" fill="#ddd"/><rect x="170.4" y="94.8" width="3" height="3" fill="#ddd"/><rect x="174.6" y="66.0" width="3" height="3" fill="#ddd"/><rect x="174.6" y="70.8" width="3" height="3" fill="#ddd"/><rect x="174.6" y="75.6" width="3" height="3" fill="#ddd"/><rect x="174.6" y="80.4" width="3" height="3" fill="#ddd"/><rect x="174.6" y="85.2" width="3" height="3" fill="#ddd"/><rect x="174.6" y="90.0" width="3" height="3" fill="#ddd"/><rect x="174.6" y="94.8" width="3" height="3" fill="#ddd"/><ellipse cx="161.5" cy="47.5" rx="16.6" ry="8.9" fill="#eaeaea"/><rect x="116" y="17.5" width="2.6" height="22" fill="#222"/><rect x="121" y="17.5" width="2.6" height="22" fill="#222"/><rect x="126" y="17.5" width="2.6" height="22" fill="#222"/><rect x="131" y="17.5" width="2.6" height="22" fill="#333"/><circle cx="147" cy="27.5" r="8.5" fill="none" stroke="#1a1a1a" stroke-width="4"/><rect x="162.6" y="17" width="17.7" height="6" rx="2" fill="#1a1a1a"/><rect x="170" y="28" width="9" height="5" rx="1" fill="#1a1a1a"/><rect x="162" y="25" width="4" height="7" fill="#333"/><rect x="98.2" y="17.5" width="12.2" height="10" fill="#555"/></g><path d="M0 0 H50.4 L160.3 93.0 L192.7 119.6 L159.1 162.8 H0 Z" fill="#fff"/><path d="M50.4 0 H65.4 L176.5 68.7 L160.3 93.0 Z" fill="#fe0000"/><rect x="12.9" y="37.4" width="55.6" height="11.6" fill="#0d1b4a"/></svg><div class="abs t" style="left:15.83px;top:39.25px;font-size:9.01px;font-weight:400;color:#fff;letter-spacing:0px;transform:scaleX(1.1719);transform-origin:0 0;">New video</div><div class="abs t" style="left:14.18px;top:62.58px;font-size:21.08px;font-weight:700;color:#0a0a0a;letter-spacing:0px;transform:scaleX(1.1525);transform-origin:0 0;-webkit-text-stroke:0.60px #0a0a0a;">Youtube</div><div class="abs t" style="left:14.33px;top:87.98px;font-size:21.08px;font-weight:700;color:#0a0a0a;letter-spacing:0px;transform:scaleX(1.1363);transform-origin:0 0;-webkit-text-stroke:0.60px #0a0a0a;">Thumbnail</div><div class="abs t" style="left:14.32px;top:113.38px;font-size:21.08px;font-weight:700;color:#0a0a0a;letter-spacing:0px;transform:scaleX(1.1688);transform-origin:0 0;-webkit-text-stroke:0.60px #0a0a0a;">Template</div></div><div class="abs" style="left:0;top:381.2px;width:289.1px;height:160px;border-radius:6px 6px 0 0;overflow:hidden;background:#fff"><svg style="left:0;top:0" width="289" height="160"><path d="M289.1 0 L166.9 68.2 L166.9 94.2 L281.7 160.0 L289.1 160.0 Z" fill="#a0221e"/><rect x="93.9" y="56.7" width="84.9" height="50.4" rx="12" fill="#a0221e"/><path d="M127.8 70.7 L146.1 82.1 L127.8 93.5 Z" fill="#fff" stroke="#fff" stroke-width="2" stroke-linejoin="round"/></svg><div class="abs t" style="left:213.89px;top:63.13px;font-size:15.70px;font-weight:400;color:#fbeaea;letter-spacing:0px;transform:scaleX(0.9089);transform-origin:0 0;">Youtube</div><div class="abs t" style="left:202.28px;top:77.72px;font-size:16.28px;font-weight:400;color:#fbeaea;letter-spacing:0px;transform:scaleX(0.8811);transform-origin:0 0;">Thumbnails</div></div></div>
<div class="abs" style="left:412px;top:58px;width:908px;height:677px;background:#ecedec"></div>
<div class="abs" style="left:412px;top:58px;width:908px;height:45px;background:#f0f3f4;border-bottom:1px solid #cbcbcb;box-shadow:0 1px 4px rgba(0,0,0,.12)"></div>
<div class="abs" style="left:454px;top:58px;width:1px;height:44px;background:#dcdee0"></div>
<div class="abs" style="left:670px;top:58px;width:1px;height:44px;background:#dcdee0"></div>
<div class="abs" style="left:1278px;top:58px;width:1px;height:44px;background:#dcdee0"></div>
<svg style="left:0;top:0" width="1320" height="110"><g fill="none" stroke="#2d3760" stroke-width="1.9"><circle cx="432.6" cy="79.4" r="10.2"/><path d="M434.6 74.2 L429.6 79.4 L434.6 84.6"/><circle cx="1299.2" cy="79.2" r="10.2"/><path d="M1297.2 74 L1302.2 79.2 L1297.2 84.4"/></g></svg>
<div class="abs t" style="left:466.10px;top:74.23px;font-size:13.95px;font-weight:400;color:#262a40;letter-spacing:0px;transform:scaleX(1.0255);transform-origin:0 0;-webkit-text-stroke:0.30px #262a40;">Untitled Desigr</div>
<div class="abs t" style="left:565.29px;top:74.23px;font-size:13.95px;font-weight:400;color:#262a40;letter-spacing:0px;transform:scaleX(0.9708);transform-origin:0 0;-webkit-text-stroke:0.30px #262a40;">| 1280 X 720 px</div>
<div class="abs" style="left:852.8px;top:65.2px;width:104.6px;height:28.7px;background:#6f7696;border-radius:4px;overflow:hidden"><div class="abs" style="left:0;top:0;width:51px;height:28.7px;background:#394268"></div></div>
<svg style="left:0;top:0" width="1320" height="110"><g fill="none" stroke="#fff" stroke-width="1.5"><path d="M871.5 76.5 H884 Q888.8 76.5 888.8 81.2 Q888.8 86 884 86 H870"/><path d="M874 73.8 L871 76.6 L874 79.4"/><path d="M939.7 76.5 H927 Q922.2 76.5 922.2 81.2 Q922.2 86 927 86 H941"/><path d="M937 73.8 L940 76.6 L937 79.4"/></g></svg>
<div class="abs" style="left:1138.3px;top:64.6px;width:115.5px;height:30.3px;background:#2ec30e;border-radius:4px"></div>
<div class="abs" style="left:1224px;top:64.6px;width:1px;height:30.3px;background:#27a80c"></div>
<svg style="left:0;top:0" width="1320" height="110"><g fill="none" stroke="#fff" stroke-width="1.6"><path d="M1147.7 71.8 H1160.5 L1164 75.3 V87.7 H1147.7 Z"/><path d="M1151.3 72 V76.8 H1158.8 V72"/><path d="M1150.8 87.5 V81.3 H1161 V87.5"/></g><path d="M1234.5 78.5 H1243.3 L1238.9 83.2 Z" fill="#fff"/></svg>
<div class="abs t" style="left:1179.09px;top:71.25px;font-size:14.00px;font-weight:400;color:#fff;letter-spacing:0px;transform:scaleX(0.9559);transform-origin:0 0;-webkit-text-stroke:0.45px #fff;">Save</div>
<div class="abs" style="left:444.3px;top:142px;width:844px;height:475.2px;background:#000;box-shadow:0 3px 9px rgba(0,0,0,.28);overflow:hidden"><svg style="left:0;top:0" width="845" height="475"><defs><filter id="smoke" x="-40%" y="-40%" width="180%" height="180%"><feTurbulence type="fractalNoise" baseFrequency="0.016" numOctaves="3" seed="9" result="n1"/><feDisplacementMap in="SourceGraphic" in2="n1" scale="70" xChannelSelector="R" yChannelSelector="G" result="d"/><feTurbulence type="fractalNoise" baseFrequency="0.045" numOctaves="4" seed="3" result="n2"/><feColorMatrix in="n2" type="matrix" values="0 0 0 0 0  0 0 0 0 0  0 0 0 0 0  2.4 0 0 0 -0.6" result="m"/><feComposite in="d" in2="m" operator="in" result="dm"/><feGaussianBlur in="dm" stdDeviation="1.2"/></filter><filter id="smoke2" x="-40%" y="-40%" width="180%" height="180%"><feTurbulence type="fractalNoise" baseFrequency="0.03" numOctaves="3" seed="21" result="n1"/><feDisplacementMap in="SourceGraphic" in2="n1" scale="40" xChannelSelector="R" yChannelSelector="G" result="d"/><feTurbulence type="fractalNoise" baseFrequency="0.06" numOctaves="3" seed="17" result="n2"/><feColorMatrix in="n2" type="matrix" values="0 0 0 0 0  0 0 0 0 0  0 0 0 0 0  3 0 0 0 -1.1" result="m"/><feComposite in="d" in2="m" operator="in" result="dm"/><feGaussianBlur in="dm" stdDeviation="1"/></filter><filter id="blur6"><feGaussianBlur stdDeviation="7"/></filter><radialGradient id="rg1" cx="0.5" cy="0.5" r="0.5"><stop offset="0" stop-color="#03070f"/><stop offset="0.2" stop-color="#081630"/><stop offset="0.42" stop-color="#1a3f85"/><stop offset="0.62" stop-color="#163877"/><stop offset="0.8" stop-color="#0f2857"/><stop offset="0.93" stop-color="#081630"/><stop offset="1" stop-color="#000" stop-opacity="0"/></radialGradient><radialGradient id="rg0" cx="0.5" cy="0.5" r="0.5"><stop offset="0" stop-color="#02050c"/><stop offset="0.3" stop-color="#06112a"/><stop offset="0.6" stop-color="#0a1d45"/><stop offset="0.85" stop-color="#061230"/><stop offset="1" stop-color="#000" stop-opacity="0"/></radialGradient><radialGradient id="rg2" cx="0.5" cy="0.5" r="0.5"><stop offset="0" stop-color="#000" stop-opacity="0"/><stop offset="0.3" stop-color="#1a3f88" stop-opacity="0"/><stop offset="0.5" stop-color="#2c64c4"/><stop offset="0.75" stop-color="#2458b0"/><stop offset="1" stop-color="#000" stop-opacity="0"/></radialGradient></defs><ellipse cx="419.7" cy="236.0" rx="190" ry="186" fill="url(#rg0)" filter="url(#blur6)"/><g filter="url(#smoke)"><ellipse cx="419.7" cy="236.0" rx="205" ry="198" fill="url(#rg1)"/></g><g filter="url(#smoke2)" opacity="0.8"><ellipse cx="419.7" cy="236.0" rx="150" ry="145" fill="url(#rg2)"/></g><ellipse cx="419.7" cy="228.0" rx="40" ry="36" fill="#01040a" filter="url(#blur6)"/><g fill="none" stroke-linecap="round"><path d="M355.2 242.1 Q350.5 242.9 345.7 243.3" stroke="rgba(70,125,215,0.47)" stroke-width="1.04"/><path d="M447.2 128.8 Q449.1 126.8 453.0 125.3" stroke="rgba(110,180,255,0.80)" stroke-width="1.02"/><path d="M342.3 287.1 Q338.1 289.0 333.1 289.7" stroke="rgba(110,180,255,0.77)" stroke-width="1.18"/><path d="M543.4 279.9 Q547.7 283.4 550.9 289.1" stroke="rgba(85,150,240,0.37)" stroke-width="0.96"/><path d="M358.0 153.2 Q355.5 149.1 353.9 144.3" stroke="rgba(150,210,255,0.65)" stroke-width="0.88"/><path d="M329.5 197.9 Q326.6 195.8 324.3 192.3" stroke="rgba(110,180,255,0.68)" stroke-width="0.65"/><path d="M428.1 146.6 Q429.7 142.5 433.3 138.8" stroke="rgba(110,180,255,0.60)" stroke-width="1.19"/><path d="M518.9 228.3 Q523.5 230.4 527.8 235.7" stroke="rgba(110,180,255,0.61)" stroke-width="1.00"/><path d="M463.3 357.9 Q466.0 363.0 470.1 367.6" stroke="rgba(110,180,255,0.33)" stroke-width="1.27"/><path d="M424.7 128.8 Q423.0 126.2 418.5 123.6" stroke="rgba(85,150,240,0.87)" stroke-width="1.08"/><path d="M456.8 318.9 Q456.6 324.1 453.5 330.3" stroke="rgba(70,125,215,0.85)" stroke-width="1.05"/><path d="M472.8 275.7 Q474.4 279.2 474.4 284.1" stroke="rgba(150,210,255,0.87)" stroke-width="1.30"/><path d="M512.9 239.6 Q515.7 241.9 517.8 247.2" stroke="rgba(110,180,255,0.74)" stroke-width="0.63"/><path d="M469.9 293.9 Q472.2 298.9 472.9 305.0" stroke="rgba(110,180,255,0.60)" stroke-width="0.66"/><path d="M344.0 184.7 Q341.3 182.7 338.9 180.2" stroke="rgba(70,125,215,0.59)" stroke-width="0.69"/><path d="M340.8 179.8 Q337.6 177.2 334.7 174.0" stroke="rgba(85,150,240,0.55)" stroke-width="1.17"/><path d="M419.9 302.7 Q419.2 305.8 417.2 308.8" stroke="rgba(85,150,240,0.96)" stroke-width="1.08"/><path d="M361.4 277.3 Q360.5 279.8 360.9 283.5" stroke="rgba(150,210,255,0.68)" stroke-width="0.77"/><path d="M395.2 144.5 Q395.4 140.8 397.4 136.8" stroke="rgba(150,210,255,0.74)" stroke-width="0.96"/><path d="M508.5 185.7 Q513.0 184.3 517.8 183.8" stroke="rgba(110,180,255,0.75)" stroke-width="0.80"/><path d="M492.8 186.2 Q494.6 183.1 495.0 177.9" stroke="rgba(70,125,215,0.52)" stroke-width="0.77"/><path d="M496.4 251.1 Q503.9 251.8 511.9 250.1" stroke="rgba(70,125,215,0.44)" stroke-width="1.29"/><path d="M356.3 132.2 Q353.4 127.1 351.1 121.7" stroke="rgba(110,180,255,0.44)" stroke-width="1.25"/><path d="M347.6 239.5 Q345.4 239.6 343.1 239.2" stroke="rgba(110,180,255,0.40)" stroke-width="1.11"/><path d="M376.8 320.8 Q375.5 328.4 376.9 337.1" stroke="rgba(110,180,255,0.70)" stroke-width="1.23"/><path d="M413.7 154.5 Q412.7 147.5 410.8 140.6" stroke="rgba(110,180,255,0.80)" stroke-width="1.21"/><path d="M380.5 250.5 Q374.6 252.9 368.1 254.2" stroke="rgba(70,125,215,0.72)" stroke-width="0.87"/><path d="M514.8 235.5 Q517.5 234.7 520.3 232.5" stroke="rgba(150,210,255,0.62)" stroke-width="0.87"/><path d="M411.2 137.8 Q410.5 132.7 409.4 127.5" stroke="rgba(110,180,255,0.89)" stroke-width="0.96"/><path d="M337.8 220.5 Q335.9 218.7 334.3 214.6" stroke="rgba(70,125,215,0.42)" stroke-width="0.78"/><path d="M515.0 234.8 Q518.6 235.8 522.1 237.9" stroke="rgba(85,150,240,0.48)" stroke-width="1.13"/><path d="M358.5 321.2 Q357.0 324.2 356.1 327.6" stroke="rgba(70,125,215,0.51)" stroke-width="1.16"/><path d="M421.9 154.0 Q421.0 150.9 418.8 147.8" stroke="rgba(150,210,255,0.49)" stroke-width="0.75"/><path d="M456.7 269.8 Q459.0 270.7 462.4 270.6" stroke="rgba(85,150,240,0.99)" stroke-width="0.68"/><path d="M294.6 250.8 Q287.3 250.2 279.6 246.8" stroke="rgba(70,125,215,0.48)" stroke-width="1.07"/><path d="M397.8 126.0 Q398.4 122.0 401.2 117.7" stroke="rgba(110,180,255,0.53)" stroke-width="1.07"/><path d="M408.5 284.7 Q407.3 288.5 405.6 292.2" stroke="rgba(85,150,240,0.72)" stroke-width="0.88"/><path d="M452.2 310.1 Q453.5 316.3 452.9 323.2" stroke="rgba(110,180,255,0.99)" stroke-width="0.91"/><path d="M373.7 179.0 Q370.5 174.3 368.5 168.6" stroke="rgba(85,150,240,0.97)" stroke-width="0.74"/><path d="M333.2 241.6 Q328.6 241.5 323.7 240.2" stroke="rgba(150,210,255,0.47)" stroke-width="1.15"/><path d="M333.3 206.0 Q326.3 204.2 319.3 202.4" stroke="rgba(85,150,240,1.00)" stroke-width="0.88"/><path d="M444.3 136.7 Q447.1 130.1 451.3 123.9" stroke="rgba(70,125,215,0.43)" stroke-width="0.74"/><path d="M480.7 175.8 Q482.4 174.6 484.2 173.6" stroke="rgba(150,210,255,0.77)" stroke-width="0.92"/><path d="M363.5 149.3 Q360.2 143.6 357.7 137.4" stroke="rgba(85,150,240,0.82)" stroke-width="0.77"/><path d="M324.9 306.2 Q323.6 308.5 323.3 311.9" stroke="rgba(150,210,255,0.89)" stroke-width="0.78"/><path d="M397.1 116.0 Q395.9 113.9 393.6 112.2" stroke="rgba(150,210,255,0.62)" stroke-width="0.94"/><path d="M507.1 243.8 Q513.7 243.2 520.7 239.9" stroke="rgba(85,150,240,0.87)" stroke-width="0.97"/><path d="M377.3 127.2 Q376.2 119.5 377.9 110.8" stroke="rgba(70,125,215,0.69)" stroke-width="1.26"/><path d="M347.4 231.4 Q340.3 233.1 333.4 237.1" stroke="rgba(150,210,255,0.49)" stroke-width="1.18"/><path d="M326.4 190.0 Q319.5 188.4 312.0 188.4" stroke="rgba(85,150,240,0.79)" stroke-width="0.81"/><path d="M489.7 313.9 Q493.7 317.0 498.9 319.1" stroke="rgba(70,125,215,0.67)" stroke-width="0.98"/><path d="M338.2 226.4 Q330.9 226.2 323.6 225.9" stroke="rgba(110,180,255,0.61)" stroke-width="0.94"/><path d="M389.8 151.1 Q389.1 148.9 388.5 146.5" stroke="rgba(70,125,215,0.62)" stroke-width="0.79"/><path d="M317.3 245.4 Q310.6 244.7 303.6 241.1" stroke="rgba(150,210,255,0.66)" stroke-width="0.68"/><path d="M328.4 278.5 Q327.1 280.5 326.5 283.8" stroke="rgba(110,180,255,0.81)" stroke-width="0.62"/><path d="M478.7 315.5 Q483.1 319.8 488.9 323.0" stroke="rgba(70,125,215,0.67)" stroke-width="1.11"/><path d="M482.4 289.0 Q486.5 291.6 491.6 293.2" stroke="rgba(70,125,215,0.48)" stroke-width="0.62"/><path d="M351.9 153.0 Q349.8 148.2 349.5 142.0" stroke="rgba(85,150,240,0.70)" stroke-width="0.97"/><path d="M453.2 182.6 Q457.2 178.8 462.3 176.0" stroke="rgba(150,210,255,0.50)" stroke-width="1.23"/><path d="M393.8 287.0 Q391.2 289.3 386.8 290.7" stroke="rgba(85,150,240,0.93)" stroke-width="1.22"/><path d="M511.1 328.5 Q513.3 329.9 516.1 330.7" stroke="rgba(70,125,215,0.40)" stroke-width="0.98"/><path d="M392.7 135.6 Q389.3 129.9 383.3 125.2" stroke="rgba(150,210,255,0.72)" stroke-width="1.24"/><path d="M535.5 204.7 Q538.1 204.2 540.7 203.7" stroke="rgba(85,150,240,0.84)" stroke-width="1.16"/><path d="M294.3 242.2 Q288.7 240.6 283.0 235.7" stroke="rgba(85,150,240,0.55)" stroke-width="0.73"/><path d="M446.0 316.3 Q446.0 323.3 442.8 330.9" stroke="rgba(110,180,255,0.95)" stroke-width="1.01"/><path d="M474.1 289.3 Q476.1 290.9 478.5 292.2" stroke="rgba(150,210,255,0.63)" stroke-width="0.90"/><path d="M357.5 182.2 Q356.2 180.5 355.5 177.9" stroke="rgba(85,150,240,0.90)" stroke-width="0.89"/><path d="M388.7 265.7 Q386.0 270.4 384.6 276.0" stroke="rgba(150,210,255,0.87)" stroke-width="1.23"/><path d="M459.7 109.1 Q463.5 104.2 470.0 100.3" stroke="rgba(70,125,215,0.64)" stroke-width="1.00"/><path d="M444.0 290.5 Q446.9 296.1 450.8 301.2" stroke="rgba(85,150,240,0.43)" stroke-width="1.17"/><path d="M357.6 269.8 Q351.1 272.6 343.6 273.6" stroke="rgba(70,125,215,0.80)" stroke-width="1.14"/><path d="M349.6 275.1 Q346.5 277.4 343.4 279.8" stroke="rgba(150,210,255,0.36)" stroke-width="1.29"/><path d="M482.7 183.8 Q484.1 181.9 484.9 179.1" stroke="rgba(150,210,255,0.97)" stroke-width="0.84"/><path d="M387.9 178.1 Q386.8 173.9 387.5 168.7" stroke="rgba(110,180,255,0.77)" stroke-width="1.13"/><path d="M492.6 218.8 Q494.7 218.9 496.9 219.5" stroke="rgba(150,210,255,0.83)" stroke-width="0.91"/><path d="M331.3 225.4 Q329.2 226.2 327.1 228.4" stroke="rgba(150,210,255,0.53)" stroke-width="0.99"/><path d="M368.4 225.5 Q361.1 224.9 353.8 224.1" stroke="rgba(70,125,215,1.00)" stroke-width="1.17"/><path d="M466.6 252.4 Q468.2 254.3 468.9 257.4" stroke="rgba(70,125,215,0.45)" stroke-width="1.28"/><path d="M458.3 178.6 Q461.6 174.9 465.2 171.4" stroke="rgba(70,125,215,0.63)" stroke-width="0.89"/><path d="M353.4 216.7 Q349.9 215.7 346.6 214.0" stroke="rgba(150,210,255,0.71)" stroke-width="1.06"/><path d="M418.7 155.2 Q419.5 153.1 421.6 150.9" stroke="rgba(85,150,240,0.73)" stroke-width="0.89"/><path d="M377.3 131.1 Q376.0 127.1 375.1 122.9" stroke="rgba(150,210,255,0.82)" stroke-width="0.65"/><path d="M496.6 176.1 Q500.2 173.6 503.7 171.0" stroke="rgba(85,150,240,0.98)" stroke-width="0.63"/><path d="M505.6 289.1 Q506.6 292.5 505.8 298.1" stroke="rgba(110,180,255,0.51)" stroke-width="0.64"/><path d="M493.8 295.8 Q496.3 297.3 499.4 298.2" stroke="rgba(70,125,215,0.44)" stroke-width="0.92"/><path d="M414.5 296.5 Q414.3 301.7 414.6 307.0" stroke="rgba(85,150,240,0.86)" stroke-width="1.27"/><path d="M411.1 141.6 Q411.6 134.6 413.8 127.5" stroke="rgba(150,210,255,0.76)" stroke-width="0.79"/><path d="M344.3 165.8 Q340.2 161.3 337.0 155.8" stroke="rgba(150,210,255,0.47)" stroke-width="1.13"/><path d="M451.6 308.3 Q452.8 315.4 451.8 323.2" stroke="rgba(110,180,255,0.38)" stroke-width="0.61"/><path d="M410.6 380.7 Q413.4 383.0 420.5 385.3" stroke="rgba(150,210,255,0.13)" stroke-width="0.65"/><path d="M481.7 265.4 Q486.6 267.9 491.8 269.8" stroke="rgba(85,150,240,0.66)" stroke-width="0.84"/><path d="M360.9 230.1 Q358.1 229.2 355.4 226.9" stroke="rgba(70,125,215,0.87)" stroke-width="1.17"/><path d="M357.0 166.3 Q353.3 163.9 348.6 162.6" stroke="rgba(150,210,255,0.88)" stroke-width="0.71"/><path d="M455.6 168.5 Q457.7 163.6 459.0 158.3" stroke="rgba(85,150,240,0.84)" stroke-width="0.90"/><path d="M333.8 320.4 Q333.8 323.7 336.2 329.0" stroke="rgba(70,125,215,0.60)" stroke-width="1.17"/><path d="M308.7 253.9 Q302.9 257.8 298.2 265.3" stroke="rgba(110,180,255,0.55)" stroke-width="1.09"/><path d="M331.8 230.9 Q325.0 232.2 318.4 235.3" stroke="rgba(150,210,255,0.78)" stroke-width="0.86"/><path d="M467.6 271.5 Q471.8 275.6 475.8 280.0" stroke="rgba(150,210,255,0.95)" stroke-width="0.91"/><path d="M445.5 153.4 Q448.3 150.0 453.2 147.4" stroke="rgba(85,150,240,0.93)" stroke-width="0.66"/><path d="M469.8 134.9 Q471.5 133.4 474.2 132.4" stroke="rgba(85,150,240,0.73)" stroke-width="1.12"/><path d="M368.8 283.4 Q366.0 288.0 364.6 293.7" stroke="rgba(70,125,215,0.41)" stroke-width="1.22"/><path d="M401.1 321.0 Q400.6 323.1 400.0 325.1" stroke="rgba(150,210,255,0.70)" stroke-width="1.28"/><path d="M368.0 155.7 Q366.0 150.9 365.4 145.3" stroke="rgba(110,180,255,0.40)" stroke-width="0.79"/><path d="M481.0 275.8 Q485.0 276.8 490.2 275.8" stroke="rgba(110,180,255,0.77)" stroke-width="1.12"/><path d="M368.4 158.4 Q364.8 153.3 361.3 148.2" stroke="rgba(70,125,215,0.85)" stroke-width="0.85"/><path d="M455.9 131.7 Q455.8 127.5 453.3 122.6" stroke="rgba(110,180,255,0.67)" stroke-width="1.10"/><path d="M461.0 203.6 Q466.3 201.4 472.2 200.4" stroke="rgba(110,180,255,0.87)" stroke-width="1.22"/><path d="M525.8 199.2 Q531.1 197.9 536.5 196.7" stroke="rgba(110,180,255,0.81)" stroke-width="0.90"/><path d="M323.2 280.7 Q317.0 284.8 311.2 289.7" stroke="rgba(85,150,240,0.46)" stroke-width="0.87"/><path d="M304.3 206.7 Q301.2 204.1 298.8 198.8" stroke="rgba(110,180,255,0.66)" stroke-width="0.81"/><path d="M493.7 337.7 Q499.5 341.2 508.5 342.1" stroke="rgba(110,180,255,0.46)" stroke-width="0.82"/><path d="M439.2 285.2 Q440.3 289.0 441.0 293.0" stroke="rgba(70,125,215,0.74)" stroke-width="1.02"/><path d="M435.0 320.5 Q434.4 323.6 432.4 326.8" stroke="rgba(70,125,215,0.55)" stroke-width="1.20"/><path d="M316.3 237.9 Q311.9 236.3 307.4 231.6" stroke="rgba(110,180,255,0.78)" stroke-width="0.94"/><path d="M445.3 367.1 Q447.2 373.3 450.1 379.2" stroke="rgba(150,210,255,0.35)" stroke-width="1.15"/><path d="M516.8 265.0 Q522.7 269.2 527.6 276.0" stroke="rgba(150,210,255,0.92)" stroke-width="0.92"/><path d="M420.6 270.9 Q420.2 275.2 418.9 279.5" stroke="rgba(85,150,240,0.44)" stroke-width="1.05"/><path d="M528.8 223.3 Q532.3 223.3 535.7 223.5" stroke="rgba(85,150,240,0.45)" stroke-width="0.60"/><path d="M468.0 127.7 Q468.1 125.0 466.7 121.7" stroke="rgba(110,180,255,0.82)" stroke-width="1.22"/><path d="M402.6 181.8 Q402.3 179.3 402.7 176.5" stroke="rgba(150,210,255,0.70)" stroke-width="0.61"/><path d="M457.3 319.3 Q460.0 325.0 463.0 330.6" stroke="rgba(70,125,215,0.37)" stroke-width="0.97"/><path d="M485.6 328.4 Q490.0 333.3 495.7 337.4" stroke="rgba(110,180,255,0.53)" stroke-width="0.99"/><path d="M501.2 226.6 Q503.6 225.3 505.9 222.2" stroke="rgba(70,125,215,0.78)" stroke-width="1.12"/><path d="M436.5 151.6 Q436.9 148.9 437.0 146.2" stroke="rgba(70,125,215,0.91)" stroke-width="0.77"/><path d="M343.7 195.6 Q337.3 191.6 331.6 186.0" stroke="rgba(85,150,240,0.48)" stroke-width="0.80"/><path d="M357.9 289.1 Q354.9 293.1 352.7 298.0" stroke="rgba(70,125,215,0.57)" stroke-width="0.99"/><path d="M500.7 277.2 Q503.3 277.9 506.5 277.6" stroke="rgba(70,125,215,0.53)" stroke-width="1.11"/><path d="M366.9 321.8 Q365.4 328.4 366.5 336.4" stroke="rgba(110,180,255,0.44)" stroke-width="0.69"/><path d="M356.4 160.2 Q354.8 158.7 353.0 157.3" stroke="rgba(110,180,255,0.81)" stroke-width="0.76"/><path d="M474.9 311.6 Q476.7 313.6 479.0 315.3" stroke="rgba(70,125,215,0.40)" stroke-width="1.25"/><path d="M477.3 296.8 Q481.1 301.2 485.0 305.6" stroke="rgba(110,180,255,0.95)" stroke-width="1.11"/><path d="M344.6 163.4 Q342.6 160.0 341.8 155.3" stroke="rgba(110,180,255,0.51)" stroke-width="0.78"/><path d="M448.6 299.3 Q451.4 303.6 455.7 307.3" stroke="rgba(150,210,255,0.57)" stroke-width="1.18"/><path d="M335.4 157.0 Q334.0 154.1 333.8 150.0" stroke="rgba(85,150,240,0.94)" stroke-width="0.85"/><path d="M309.8 227.7 Q302.4 227.6 295.0 227.4" stroke="rgba(85,150,240,0.82)" stroke-width="1.00"/><path d="M533.6 247.3 Q538.9 249.6 543.8 254.0" stroke="rgba(70,125,215,0.44)" stroke-width="1.00"/><path d="M400.2 171.6 Q398.8 167.9 397.3 164.2" stroke="rgba(85,150,240,0.43)" stroke-width="0.77"/><path d="M297.7 171.2 Q292.1 171.5 285.2 175.1" stroke="rgba(85,150,240,0.62)" stroke-width="1.24"/><path d="M519.0 223.1 Q521.7 224.3 524.4 227.6" stroke="rgba(150,210,255,0.54)" stroke-width="0.77"/><path d="M369.3 202.9 Q363.0 200.7 356.2 199.8" stroke="rgba(110,180,255,0.71)" stroke-width="0.92"/><path d="M339.8 283.5 Q334.6 289.1 330.8 296.6" stroke="rgba(70,125,215,0.84)" stroke-width="1.03"/><path d="M428.0 128.9 Q428.3 126.7 428.8 124.6" stroke="rgba(70,125,215,0.43)" stroke-width="0.72"/><path d="M313.8 214.8 Q310.4 214.0 307.1 212.8" stroke="rgba(110,180,255,0.57)" stroke-width="1.11"/><path d="M434.4 166.8 Q434.6 164.3 434.1 161.5" stroke="rgba(70,125,215,0.93)" stroke-width="1.13"/><path d="M318.0 237.1 Q310.4 236.2 302.8 232.9" stroke="rgba(70,125,215,0.91)" stroke-width="1.18"/><path d="M514.9 314.5 Q517.7 317.2 520.3 319.9" stroke="rgba(110,180,255,0.48)" stroke-width="0.82"/><path d="M535.9 269.6 Q540.8 273.6 544.4 280.7" stroke="rgba(150,210,255,0.73)" stroke-width="1.13"/><path d="M393.3 301.8 Q392.5 304.4 392.0 307.1" stroke="rgba(70,125,215,0.68)" stroke-width="1.28"/><path d="M339.7 240.3 Q336.9 239.3 334.0 236.2" stroke="rgba(70,125,215,0.70)" stroke-width="1.26"/><path d="M510.6 142.4 Q515.0 137.2 518.7 131.2" stroke="rgba(85,150,240,0.60)" stroke-width="0.76"/><path d="M417.9 142.2 Q419.3 137.1 423.1 132.0" stroke="rgba(85,150,240,0.41)" stroke-width="0.69"/><path d="M335.3 207.7 Q331.9 207.7 328.3 208.7" stroke="rgba(110,180,255,0.56)" stroke-width="0.91"/><path d="M338.1 254.5 Q333.9 257.3 330.4 262.0" stroke="rgba(85,150,240,0.80)" stroke-width="0.63"/><path d="M520.3 247.9 Q524.5 250.8 528.1 256.4" stroke="rgba(70,125,215,0.99)" stroke-width="1.22"/><path d="M441.3 298.5 Q442.6 305.1 443.0 312.0" stroke="rgba(150,210,255,0.39)" stroke-width="1.19"/><path d="M376.2 284.7 Q370.7 289.1 363.3 291.8" stroke="rgba(85,150,240,0.48)" stroke-width="0.73"/><path d="M484.3 167.5 Q484.9 164.8 484.0 160.7" stroke="rgba(150,210,255,0.82)" stroke-width="1.27"/><path d="M413.3 270.2 Q411.9 273.9 409.0 277.3" stroke="rgba(70,125,215,0.86)" stroke-width="0.66"/><path d="M438.1 336.1 Q437.7 339.9 435.9 343.9" stroke="rgba(85,150,240,0.48)" stroke-width="1.10"/><path d="M339.1 227.3 Q332.7 227.1 326.3 226.8" stroke="rgba(85,150,240,0.43)" stroke-width="1.28"/><path d="M502.4 164.3 Q504.0 161.5 504.5 157.3" stroke="rgba(110,180,255,0.44)" stroke-width="0.92"/><path d="M503.3 271.4 Q510.4 272.8 518.9 271.1" stroke="rgba(150,210,255,0.73)" stroke-width="0.90"/><path d="M345.8 194.0 Q343.9 191.3 343.2 186.3" stroke="rgba(85,150,240,0.47)" stroke-width="0.80"/><path d="M318.6 196.5 Q310.8 196.4 302.3 199.6" stroke="rgba(70,125,215,0.65)" stroke-width="0.60"/><path d="M523.1 144.1 Q523.3 140.8 521.2 134.8" stroke="rgba(150,210,255,0.59)" stroke-width="0.82"/><path d="M314.7 238.9 Q308.2 239.0 301.5 238.1" stroke="rgba(85,150,240,0.99)" stroke-width="1.02"/><path d="M431.7 138.8 Q431.8 136.2 431.5 133.5" stroke="rgba(150,210,255,0.78)" stroke-width="1.15"/><path d="M442.3 142.5 Q443.4 139.5 445.0 136.5" stroke="rgba(110,180,255,0.67)" stroke-width="0.74"/><path d="M531.5 207.1 Q533.7 206.5 535.8 205.5" stroke="rgba(150,210,255,0.92)" stroke-width="0.71"/><path d="M479.7 234.7 Q484.2 234.6 488.7 233.4" stroke="rgba(110,180,255,0.87)" stroke-width="0.68"/><path d="M457.5 306.0 Q459.6 311.1 461.3 316.4" stroke="rgba(85,150,240,0.82)" stroke-width="0.64"/><path d="M356.3 260.1 Q350.4 262.1 344.0 262.7" stroke="rgba(70,125,215,0.85)" stroke-width="0.66"/><path d="M438.6 188.1 Q439.5 185.3 439.6 182.1" stroke="rgba(70,125,215,0.45)" stroke-width="0.64"/><path d="M356.2 267.9 Q350.9 273.2 347.0 280.5" stroke="rgba(85,150,240,0.67)" stroke-width="0.70"/><path d="M324.9 255.3 Q319.7 259.0 315.4 265.5" stroke="rgba(85,150,240,0.51)" stroke-width="0.66"/><path d="M514.1 211.0 Q519.9 210.9 525.9 212.2" stroke="rgba(85,150,240,0.98)" stroke-width="0.81"/><path d="M494.1 296.8 Q496.7 297.6 500.4 297.2" stroke="rgba(85,150,240,0.55)" stroke-width="0.63"/><path d="M365.3 265.9 Q361.5 270.2 359.0 276.1" stroke="rgba(85,150,240,0.57)" stroke-width="0.92"/><path d="M342.3 289.7 Q338.2 294.6 335.3 300.9" stroke="rgba(85,150,240,0.58)" stroke-width="1.16"/><path d="M441.9 165.4 Q443.1 160.9 444.0 156.3" stroke="rgba(150,210,255,0.74)" stroke-width="0.93"/><path d="M344.5 232.6 Q339.8 232.8 335.1 232.7" stroke="rgba(110,180,255,0.62)" stroke-width="1.08"/><path d="M370.8 285.0 Q369.7 288.7 370.5 293.8" stroke="rgba(150,210,255,0.47)" stroke-width="0.96"/><path d="M350.3 196.8 Q347.4 197.0 343.7 199.3" stroke="rgba(150,210,255,0.82)" stroke-width="0.70"/><path d="M423.8 300.3 Q425.5 306.8 429.2 313.1" stroke="rgba(70,125,215,1.00)" stroke-width="0.91"/><path d="M463.9 170.6 Q468.5 165.6 473.9 161.1" stroke="rgba(85,150,240,0.55)" stroke-width="0.94"/><path d="M457.3 319.1 Q460.6 322.9 466.1 325.7" stroke="rgba(70,125,215,0.49)" stroke-width="0.90"/><path d="M313.2 197.8 Q310.2 195.8 307.7 192.4" stroke="rgba(85,150,240,0.78)" stroke-width="1.22"/><path d="M477.7 129.4 Q479.9 125.0 481.9 120.5" stroke="rgba(150,210,255,0.44)" stroke-width="0.76"/><path d="M399.7 301.9 Q400.6 304.5 403.8 307.5" stroke="rgba(110,180,255,0.76)" stroke-width="1.17"/><path d="M518.4 212.8 Q522.1 212.9 525.9 214.2" stroke="rgba(85,150,240,0.95)" stroke-width="0.99"/><path d="M349.6 320.2 Q346.1 322.6 340.9 323.7" stroke="rgba(70,125,215,0.52)" stroke-width="0.68"/><path d="M305.1 233.1 Q300.3 231.2 295.6 226.0" stroke="rgba(150,210,255,0.53)" stroke-width="0.76"/><path d="M507.3 183.7 Q511.3 182.7 515.7 183.0" stroke="rgba(150,210,255,0.69)" stroke-width="1.24"/><path d="M461.5 110.0 Q461.8 105.2 460.3 99.8" stroke="rgba(150,210,255,0.77)" stroke-width="1.09"/><path d="M487.3 237.9 Q489.6 237.9 492.0 237.6" stroke="rgba(70,125,215,0.39)" stroke-width="1.19"/><path d="M388.7 323.5 Q385.2 328.6 379.3 332.8" stroke="rgba(110,180,255,0.40)" stroke-width="0.84"/><path d="M473.2 184.7 Q477.0 180.4 479.8 174.9" stroke="rgba(150,210,255,0.66)" stroke-width="1.27"/><path d="M368.7 287.6 Q364.1 290.6 357.9 291.8" stroke="rgba(110,180,255,0.85)" stroke-width="1.03"/><path d="M360.9 264.8 Q354.7 267.3 347.6 268.0" stroke="rgba(70,125,215,0.60)" stroke-width="0.63"/><path d="M482.6 300.2 Q486.4 303.2 491.0 305.5" stroke="rgba(110,180,255,0.58)" stroke-width="0.70"/><path d="M451.8 313.0 Q454.9 315.4 460.5 316.5" stroke="rgba(70,125,215,0.70)" stroke-width="0.60"/><path d="M303.1 192.5 Q297.1 189.2 291.9 183.9" stroke="rgba(150,210,255,0.37)" stroke-width="0.78"/><path d="M522.3 306.4 Q525.1 307.9 528.4 308.7" stroke="rgba(85,150,240,0.35)" stroke-width="1.18"/><path d="M468.9 304.9 Q471.8 309.4 474.8 314.0" stroke="rgba(150,210,255,0.72)" stroke-width="0.89"/><path d="M371.4 281.5 Q368.0 286.0 365.1 290.8" stroke="rgba(85,150,240,0.81)" stroke-width="1.21"/><path d="M481.0 223.8 Q487.6 224.5 494.2 227.0" stroke="rgba(70,125,215,0.55)" stroke-width="0.96"/><path d="M368.8 121.1 Q366.9 117.3 364.8 113.5" stroke="rgba(70,125,215,0.57)" stroke-width="0.96"/><path d="M446.9 137.6 Q448.9 133.9 452.2 130.6" stroke="rgba(150,210,255,0.51)" stroke-width="0.73"/><path d="M478.2 153.6 Q481.4 152.7 486.7 153.7" stroke="rgba(85,150,240,0.77)" stroke-width="1.04"/><path d="M476.1 127.0 Q477.5 120.5 476.3 112.7" stroke="rgba(150,210,255,0.60)" stroke-width="0.76"/><path d="M466.7 335.9 Q467.3 343.5 464.3 352.3" stroke="rgba(150,210,255,0.44)" stroke-width="0.89"/><path d="M359.5 162.8 Q358.0 158.5 358.3 152.7" stroke="rgba(110,180,255,0.99)" stroke-width="0.71"/><path d="M516.5 226.4 Q520.5 226.5 524.5 226.8" stroke="rgba(70,125,215,0.87)" stroke-width="0.83"/><path d="M493.2 240.4 Q498.2 241.1 503.1 241.8" stroke="rgba(150,210,255,0.59)" stroke-width="0.91"/><path d="M471.6 172.6 Q475.5 168.0 478.9 163.1" stroke="rgba(70,125,215,0.44)" stroke-width="1.07"/><path d="M434.7 298.6 Q434.3 302.3 432.2 306.3" stroke="rgba(110,180,255,0.64)" stroke-width="0.99"/><path d="M503.1 164.7 Q506.4 164.4 511.1 166.1" stroke="rgba(85,150,240,0.53)" stroke-width="0.79"/><path d="M364.2 268.3 Q361.9 271.5 360.8 276.2" stroke="rgba(150,210,255,0.48)" stroke-width="0.99"/><path d="M493.0 331.1 Q498.6 334.1 507.2 334.6" stroke="rgba(85,150,240,0.47)" stroke-width="1.30"/><path d="M445.7 311.9 Q447.7 318.3 449.9 324.8" stroke="rgba(70,125,215,0.62)" stroke-width="0.99"/><path d="M431.2 279.3 Q432.6 282.5 435.2 285.3" stroke="rgba(85,150,240,0.54)" stroke-width="1.30"/><path d="M367.3 247.5 Q360.9 249.3 354.3 250.1" stroke="rgba(110,180,255,0.46)" stroke-width="1.26"/><path d="M344.7 209.2 Q342.7 208.5 340.7 207.6" stroke="rgba(70,125,215,0.39)" stroke-width="0.61"/><path d="M436.8 294.9 Q440.1 301.5 445.9 307.3" stroke="rgba(85,150,240,0.69)" stroke-width="1.15"/><path d="M415.0 177.1 Q415.1 170.5 416.2 163.9" stroke="rgba(110,180,255,0.99)" stroke-width="1.26"/><path d="M308.8 240.5 Q302.3 241.7 295.8 243.6" stroke="rgba(110,180,255,0.93)" stroke-width="0.61"/><path d="M463.3 281.2 Q466.9 284.5 471.2 287.1" stroke="rgba(70,125,215,0.99)" stroke-width="0.85"/><path d="M397.7 346.5 Q397.4 353.5 398.5 360.7" stroke="rgba(150,210,255,0.39)" stroke-width="0.75"/><path d="M461.4 316.8 Q464.1 319.6 468.5 321.6" stroke="rgba(85,150,240,0.58)" stroke-width="0.70"/><path d="M366.8 300.4 Q365.8 305.1 367.3 311.3" stroke="rgba(70,125,215,0.68)" stroke-width="0.67"/><path d="M522.3 195.1 Q523.8 193.0 524.7 189.0" stroke="rgba(110,180,255,0.39)" stroke-width="1.01"/><path d="M397.3 274.5 Q394.3 278.2 389.9 281.1" stroke="rgba(85,150,240,0.67)" stroke-width="1.17"/><path d="M459.8 246.9 Q465.8 250.3 471.2 254.7" stroke="rgba(110,180,255,0.69)" stroke-width="0.70"/><path d="M339.9 137.8 Q337.8 134.2 336.5 130.0" stroke="rgba(150,210,255,0.46)" stroke-width="1.22"/><path d="M460.8 175.9 Q463.1 171.2 463.8 165.4" stroke="rgba(70,125,215,0.89)" stroke-width="0.91"/><path d="M355.7 241.4 Q349.2 242.7 342.7 244.1" stroke="rgba(110,180,255,0.59)" stroke-width="0.96"/><path d="M486.1 241.6 Q491.2 243.0 496.2 244.8" stroke="rgba(85,150,240,0.96)" stroke-width="0.98"/><path d="M388.0 287.3 Q386.1 290.2 383.7 292.7" stroke="rgba(70,125,215,0.47)" stroke-width="1.29"/><path d="M342.6 282.5 Q336.5 286.8 330.5 291.2" stroke="rgba(85,150,240,0.50)" stroke-width="1.18"/><path d="M442.4 154.7 Q445.4 150.6 450.8 147.4" stroke="rgba(110,180,255,0.39)" stroke-width="1.10"/><path d="M419.3 323.3 Q417.7 328.2 413.9 333.0" stroke="rgba(150,210,255,0.48)" stroke-width="1.27"/><path d="M424.1 289.1 Q424.5 291.7 425.0 294.2" stroke="rgba(85,150,240,0.84)" stroke-width="0.65"/><path d="M288.2 230.8 Q280.9 233.5 274.0 240.0" stroke="rgba(150,210,255,0.69)" stroke-width="0.72"/><path d="M368.1 316.8 Q362.7 321.9 354.7 325.1" stroke="rgba(150,210,255,0.49)" stroke-width="0.68"/><path d="M440.6 273.7 Q442.0 279.0 441.9 284.9" stroke="rgba(85,150,240,0.40)" stroke-width="0.97"/><path d="M372.7 334.1 Q367.5 339.7 359.0 343.6" stroke="rgba(70,125,215,0.71)" stroke-width="0.86"/><path d="M448.8 162.5 Q452.2 156.2 456.4 150.2" stroke="rgba(85,150,240,0.49)" stroke-width="0.73"/><path d="M448.8 258.2 Q452.9 262.4 457.1 266.4" stroke="rgba(110,180,255,0.43)" stroke-width="0.78"/><path d="M380.0 287.2 Q380.0 289.6 381.6 293.0" stroke="rgba(150,210,255,0.48)" stroke-width="1.21"/><path d="M428.6 156.9 Q427.6 153.7 424.7 150.3" stroke="rgba(150,210,255,0.52)" stroke-width="1.17"/><path d="M370.5 259.7 Q364.7 263.9 359.3 268.7" stroke="rgba(85,150,240,0.81)" stroke-width="0.94"/><path d="M488.9 291.1 Q489.9 294.0 489.3 298.4" stroke="rgba(110,180,255,0.97)" stroke-width="1.07"/><path d="M316.3 258.1 Q310.3 259.3 304.1 259.9" stroke="rgba(110,180,255,0.64)" stroke-width="0.86"/><path d="M381.5 294.2 Q378.5 298.4 374.7 302.2" stroke="rgba(110,180,255,0.52)" stroke-width="1.07"/><path d="M422.2 303.1 Q423.3 310.0 425.7 316.8" stroke="rgba(150,210,255,0.62)" stroke-width="0.67"/><path d="M487.3 164.6 Q490.8 159.1 492.3 151.9" stroke="rgba(70,125,215,0.78)" stroke-width="1.23"/><path d="M479.8 265.3 Q484.6 268.9 488.9 273.3" stroke="rgba(110,180,255,0.57)" stroke-width="1.07"/><path d="M477.5 313.9 Q480.1 315.1 484.3 315.0" stroke="rgba(70,125,215,0.68)" stroke-width="1.07"/><path d="M301.0 135.3 Q294.7 131.3 287.8 128.0" stroke="rgba(110,180,255,0.29)" stroke-width="1.30"/><path d="M487.2 258.0 Q491.5 259.5 495.9 260.6" stroke="rgba(85,150,240,0.78)" stroke-width="0.96"/><path d="M384.5 207.4 Q379.9 205.6 374.8 205.0" stroke="rgba(110,180,255,0.87)" stroke-width="0.72"/><path d="M368.2 158.2 Q365.8 153.2 364.5 147.5" stroke="rgba(70,125,215,0.51)" stroke-width="1.14"/><path d="M479.4 283.9 Q483.2 289.7 485.1 297.3" stroke="rgba(110,180,255,0.93)" stroke-width="0.68"/><path d="M345.5 273.2 Q340.3 274.2 333.7 272.8" stroke="rgba(110,180,255,0.85)" stroke-width="0.81"/><path d="M311.8 223.0 Q309.0 224.8 306.2 229.3" stroke="rgba(150,210,255,0.68)" stroke-width="0.85"/><path d="M422.5 335.9 Q422.8 341.1 423.3 346.4" stroke="rgba(70,125,215,0.99)" stroke-width="0.72"/><path d="M514.2 300.8 Q519.3 304.8 524.4 308.8" stroke="rgba(85,150,240,0.43)" stroke-width="0.88"/><path d="M324.4 146.9 Q321.0 140.6 320.2 131.5" stroke="rgba(110,180,255,0.53)" stroke-width="0.76"/><path d="M453.6 116.8 Q453.8 112.6 452.6 108.0" stroke="rgba(70,125,215,0.75)" stroke-width="0.68"/><path d="M384.9 333.3 Q382.0 340.1 378.0 346.4" stroke="rgba(110,180,255,0.90)" stroke-width="0.87"/><path d="M391.4 316.1 Q390.0 321.6 389.1 327.2" stroke="rgba(85,150,240,0.93)" stroke-width="1.06"/><path d="M506.8 152.8 Q512.5 148.4 518.5 144.4" stroke="rgba(110,180,255,0.68)" stroke-width="0.88"/><path d="M393.8 308.7 Q392.9 312.6 392.3 316.7" stroke="rgba(150,210,255,0.66)" stroke-width="1.05"/><path d="M385.8 286.3 Q384.9 288.9 384.8 291.8" stroke="rgba(85,150,240,0.70)" stroke-width="0.97"/><path d="M350.7 206.7 Q348.1 206.4 345.4 206.6" stroke="rgba(70,125,215,0.55)" stroke-width="1.27"/><path d="M324.4 216.0 Q319.7 214.4 315.2 211.4" stroke="rgba(110,180,255,0.59)" stroke-width="0.60"/><path d="M329.6 168.1 Q324.8 165.7 319.6 164.1" stroke="rgba(110,180,255,0.55)" stroke-width="0.82"/><path d="M339.3 229.2 Q334.4 228.4 329.6 226.1" stroke="rgba(110,180,255,0.38)" stroke-width="0.75"/><path d="M329.7 171.3 Q324.6 168.8 319.2 167.1" stroke="rgba(110,180,255,0.41)" stroke-width="0.66"/><path d="M457.0 161.7 Q461.1 156.5 466.5 152.1" stroke="rgba(110,180,255,0.77)" stroke-width="1.30"/><path d="M315.4 234.3 Q311.4 236.5 307.7 241.4" stroke="rgba(150,210,255,0.44)" stroke-width="1.05"/><path d="M541.2 245.2 Q546.7 243.3 552.5 237.5" stroke="rgba(70,125,215,0.75)" stroke-width="0.83"/><path d="M370.4 178.4 Q366.2 172.7 363.2 165.9" stroke="rgba(110,180,255,0.46)" stroke-width="0.91"/><path d="M420.4 160.8 Q419.3 156.4 416.4 152.1" stroke="rgba(110,180,255,0.56)" stroke-width="1.18"/><path d="M520.0 199.9 Q524.2 200.3 528.9 202.8" stroke="rgba(110,180,255,0.81)" stroke-width="0.88"/><path d="M391.0 154.2 Q387.2 148.4 381.2 143.6" stroke="rgba(85,150,240,0.56)" stroke-width="1.19"/><path d="M474.2 281.4 Q479.2 286.1 484.2 290.7" stroke="rgba(70,125,215,0.37)" stroke-width="1.25"/><path d="M443.6 302.1 Q444.0 306.6 442.9 311.5" stroke="rgba(70,125,215,0.68)" stroke-width="0.67"/><path d="M416.9 168.9 Q416.9 166.0 417.4 163.0" stroke="rgba(150,210,255,0.48)" stroke-width="1.18"/><path d="M387.7 183.2 Q384.3 178.6 380.7 174.1" stroke="rgba(70,125,215,0.73)" stroke-width="0.85"/><path d="M319.2 169.6 Q316.5 165.2 315.7 157.8" stroke="rgba(70,125,215,0.56)" stroke-width="0.76"/><path d="M413.9 309.9 Q415.2 313.4 418.8 317.0" stroke="rgba(70,125,215,0.89)" stroke-width="0.77"/><path d="M432.2 281.4 Q434.9 287.9 439.5 293.9" stroke="rgba(70,125,215,0.47)" stroke-width="1.24"/><path d="M353.7 246.8 Q348.1 249.7 343.2 254.5" stroke="rgba(85,150,240,0.55)" stroke-width="0.62"/><path d="M391.9 145.1 Q390.4 140.2 389.3 135.2" stroke="rgba(85,150,240,0.57)" stroke-width="0.91"/><path d="M491.8 214.6 Q494.9 212.9 497.6 209.6" stroke="rgba(150,210,255,0.99)" stroke-width="0.68"/><path d="M429.2 126.5 Q431.5 121.5 436.4 116.9" stroke="rgba(150,210,255,0.95)" stroke-width="0.85"/><path d="M497.9 203.1 Q504.6 201.9 511.6 202.0" stroke="rgba(85,150,240,0.52)" stroke-width="0.85"/><path d="M450.8 286.8 Q453.6 293.1 455.6 299.8" stroke="rgba(85,150,240,0.54)" stroke-width="0.78"/><path d="M533.4 286.6 Q540.7 288.2 549.2 287.0" stroke="rgba(85,150,240,0.48)" stroke-width="1.03"/><path d="M329.5 202.5 Q323.7 200.8 318.0 198.8" stroke="rgba(150,210,255,0.78)" stroke-width="0.81"/><path d="M336.7 268.9 Q332.3 271.2 327.9 273.6" stroke="rgba(150,210,255,0.80)" stroke-width="1.11"/><path d="M468.2 210.1 Q472.8 208.5 477.4 207.3" stroke="rgba(85,150,240,0.58)" stroke-width="0.65"/><path d="M416.9 166.9 Q415.4 163.3 411.8 160.0" stroke="rgba(110,180,255,0.96)" stroke-width="0.74"/><path d="M367.2 285.7 Q362.0 290.7 356.0 294.9" stroke="rgba(70,125,215,0.44)" stroke-width="1.00"/><path d="M515.7 217.6 Q521.5 218.5 527.6 221.7" stroke="rgba(110,180,255,0.86)" stroke-width="0.91"/><path d="M369.2 121.7 Q368.9 115.9 371.6 108.9" stroke="rgba(110,180,255,0.92)" stroke-width="0.89"/><path d="M315.1 237.3 Q312.7 237.6 310.3 237.9" stroke="rgba(110,180,255,0.71)" stroke-width="0.69"/><path d="M399.0 291.6 Q395.3 297.9 389.4 303.3" stroke="rgba(85,150,240,0.97)" stroke-width="1.20"/><path d="M528.1 181.1 Q530.0 180.2 531.9 179.2" stroke="rgba(150,210,255,0.73)" stroke-width="1.25"/><path d="M496.8 243.6 Q499.1 245.4 501.0 248.9" stroke="rgba(110,180,255,0.97)" stroke-width="0.89"/><path d="M478.2 307.5 Q481.2 313.6 482.6 320.7" stroke="rgba(110,180,255,0.79)" stroke-width="0.60"/><path d="M525.4 276.1 Q530.2 280.9 533.2 289.0" stroke="rgba(70,125,215,0.89)" stroke-width="0.85"/><path d="M428.5 273.2 Q430.1 276.3 433.0 279.0" stroke="rgba(150,210,255,0.59)" stroke-width="0.96"/><path d="M349.1 322.8 Q344.0 325.9 336.3 326.9" stroke="rgba(85,150,240,0.62)" stroke-width="0.70"/><path d="M418.7 272.4 Q419.2 276.2 420.5 280.0" stroke="rgba(150,210,255,0.78)" stroke-width="1.02"/><path d="M338.0 186.8 Q332.5 186.2 325.9 188.4" stroke="rgba(110,180,255,0.55)" stroke-width="0.81"/><path d="M381.0 298.8 Q377.8 304.3 374.5 309.7" stroke="rgba(85,150,240,0.40)" stroke-width="0.91"/><path d="M468.2 242.1 Q473.2 242.6 478.7 241.9" stroke="rgba(110,180,255,0.79)" stroke-width="1.24"/><path d="M495.7 223.4 Q502.1 224.0 508.5 226.2" stroke="rgba(85,150,240,0.57)" stroke-width="0.87"/><path d="M397.9 319.9 Q395.7 324.8 392.0 329.2" stroke="rgba(110,180,255,0.66)" stroke-width="0.64"/><path d="M527.6 250.6 Q530.8 249.2 534.4 244.9" stroke="rgba(70,125,215,0.45)" stroke-width="1.27"/><path d="M491.3 195.1 Q495.5 194.8 500.4 196.7" stroke="rgba(150,210,255,0.44)" stroke-width="1.26"/><path d="M458.4 330.7 Q459.8 337.5 459.5 344.9" stroke="rgba(70,125,215,0.97)" stroke-width="0.86"/><path d="M403.3 116.0 Q400.5 109.3 395.0 103.0" stroke="rgba(85,150,240,0.92)" stroke-width="1.11"/><path d="M374.6 137.5 Q371.3 133.3 366.8 129.8" stroke="rgba(70,125,215,0.69)" stroke-width="1.13"/><path d="M320.4 211.2 Q312.9 211.8 305.2 215.4" stroke="rgba(110,180,255,0.49)" stroke-width="1.25"/><path d="M537.3 209.8 Q540.7 211.7 544.3 216.9" stroke="rgba(110,180,255,0.75)" stroke-width="0.81"/><path d="M438.7 159.1 Q440.5 152.0 442.1 144.8" stroke="rgba(70,125,215,0.74)" stroke-width="0.93"/><path d="M473.6 366.1 Q472.8 368.7 469.9 372.0" stroke="rgba(110,180,255,0.23)" stroke-width="0.80"/><path d="M480.3 245.8 Q484.1 247.9 487.4 251.3" stroke="rgba(110,180,255,0.97)" stroke-width="0.75"/><path d="M435.2 179.3 Q435.9 174.8 435.4 169.9" stroke="rgba(150,210,255,0.36)" stroke-width="1.28"/><path d="M375.1 301.7 Q371.4 307.3 367.5 312.7" stroke="rgba(150,210,255,0.80)" stroke-width="1.04"/><path d="M397.2 278.3 Q395.2 283.1 393.6 288.1" stroke="rgba(70,125,215,0.70)" stroke-width="0.78"/><path d="M538.5 188.9 Q543.2 188.4 548.4 189.2" stroke="rgba(85,150,240,0.64)" stroke-width="0.93"/><path d="M306.9 182.2 Q299.9 180.4 292.4 180.1" stroke="rgba(70,125,215,0.66)" stroke-width="0.71"/><path d="M482.3 206.6 Q485.3 204.3 487.6 200.4" stroke="rgba(150,210,255,0.80)" stroke-width="0.94"/><path d="M484.3 282.8 Q488.1 287.0 491.1 291.9" stroke="rgba(70,125,215,0.78)" stroke-width="0.79"/><path d="M381.4 208.7 Q376.4 206.3 371.4 204.0" stroke="rgba(70,125,215,0.41)" stroke-width="1.05"/><path d="M502.6 261.9 Q507.8 262.1 513.9 259.7" stroke="rgba(110,180,255,0.53)" stroke-width="0.76"/><path d="M462.8 148.5 Q465.0 142.4 465.7 135.6" stroke="rgba(110,180,255,0.94)" stroke-width="0.90"/><path d="M314.1 189.9 Q309.4 189.2 304.2 190.1" stroke="rgba(150,210,255,0.90)" stroke-width="1.25"/><path d="M373.3 166.9 Q369.6 162.4 365.8 158.1" stroke="rgba(85,150,240,0.54)" stroke-width="1.08"/><path d="M441.9 155.8 Q442.7 149.3 441.8 142.4" stroke="rgba(150,210,255,0.88)" stroke-width="1.10"/><path d="M461.6 239.9 Q467.5 242.6 472.9 246.9" stroke="rgba(70,125,215,0.78)" stroke-width="1.15"/><path d="M317.3 142.7 Q311.4 141.2 303.4 142.6" stroke="rgba(110,180,255,0.53)" stroke-width="0.78"/><path d="M406.3 282.8 Q406.0 287.0 406.5 291.4" stroke="rgba(150,210,255,0.75)" stroke-width="1.29"/><path d="M338.5 149.0 Q338.1 146.1 339.6 141.5" stroke="rgba(110,180,255,0.85)" stroke-width="1.00"/><path d="M526.0 188.5 Q531.2 186.6 536.3 184.6" stroke="rgba(150,210,255,0.60)" stroke-width="0.63"/><path d="M430.0 313.4 Q432.1 318.6 436.5 323.4" stroke="rgba(70,125,215,0.45)" stroke-width="0.82"/><path d="M405.5 326.3 Q402.7 331.7 397.1 336.5" stroke="rgba(110,180,255,0.56)" stroke-width="1.24"/><path d="M390.0 342.2 Q387.5 349.1 384.2 355.6" stroke="rgba(110,180,255,0.98)" stroke-width="0.83"/><path d="M409.0 285.5 Q407.7 287.5 405.1 289.2" stroke="rgba(70,125,215,0.70)" stroke-width="1.13"/><path d="M338.7 214.6 Q335.5 212.4 332.7 208.1" stroke="rgba(70,125,215,0.59)" stroke-width="0.83"/><path d="M516.8 273.7 Q520.3 277.7 522.3 284.4" stroke="rgba(70,125,215,0.77)" stroke-width="0.75"/><path d="M501.4 183.1 Q507.8 181.6 515.4 182.5" stroke="rgba(70,125,215,0.40)" stroke-width="0.90"/><path d="M384.9 146.7 Q384.3 141.0 386.3 134.4" stroke="rgba(150,210,255,0.94)" stroke-width="1.01"/><path d="M371.1 254.9 Q369.8 256.7 369.2 259.8" stroke="rgba(110,180,255,0.47)" stroke-width="1.03"/><path d="M471.3 344.5 Q471.2 350.2 467.7 357.2" stroke="rgba(110,180,255,0.42)" stroke-width="1.09"/><path d="M344.8 248.9 Q340.9 251.4 337.7 255.9" stroke="rgba(150,210,255,0.66)" stroke-width="1.22"/><path d="M516.5 263.6 Q522.1 265.3 527.8 266.7" stroke="rgba(70,125,215,0.43)" stroke-width="0.95"/><path d="M440.1 136.0 Q442.1 133.0 445.8 130.5" stroke="rgba(70,125,215,0.51)" stroke-width="0.63"/><path d="M397.2 139.2 Q394.2 135.3 388.4 132.2" stroke="rgba(70,125,215,0.40)" stroke-width="1.11"/><path d="M352.4 165.5 Q349.4 164.1 345.5 163.9" stroke="rgba(150,210,255,0.83)" stroke-width="1.25"/><path d="M365.8 164.4 Q362.1 158.8 359.5 152.4" stroke="rgba(70,125,215,0.73)" stroke-width="1.21"/><path d="M452.1 312.3 Q454.4 313.8 458.7 314.3" stroke="rgba(85,150,240,0.52)" stroke-width="0.86"/><path d="M358.8 253.5 Q353.9 255.9 349.2 258.6" stroke="rgba(110,180,255,0.55)" stroke-width="0.92"/><path d="M328.9 243.2 Q322.2 244.5 315.5 246.2" stroke="rgba(70,125,215,0.59)" stroke-width="1.22"/><path d="M498.6 268.2 Q503.1 270.9 507.4 274.2" stroke="rgba(70,125,215,1.00)" stroke-width="0.90"/><path d="M360.9 143.3 Q360.0 140.0 360.6 135.7" stroke="rgba(150,210,255,0.70)" stroke-width="0.99"/><path d="M343.8 289.7 Q341.6 293.8 341.1 299.8" stroke="rgba(70,125,215,0.60)" stroke-width="0.81"/><path d="M484.5 209.5 Q490.3 207.7 496.0 205.5" stroke="rgba(110,180,255,0.67)" stroke-width="1.17"/><path d="M451.6 175.8 Q455.3 171.2 460.0 167.2" stroke="rgba(70,125,215,0.84)" stroke-width="0.78"/><path d="M390.2 125.9 Q389.0 121.0 388.1 116.0" stroke="rgba(85,150,240,0.99)" stroke-width="1.13"/><path d="M336.5 179.1 Q335.2 177.1 334.8 173.8" stroke="rgba(70,125,215,0.57)" stroke-width="0.83"/><path d="M472.2 200.2 Q477.8 197.2 483.4 194.2" stroke="rgba(70,125,215,0.67)" stroke-width="1.07"/><path d="M510.7 292.5 Q515.0 295.2 519.6 297.5" stroke="rgba(150,210,255,0.36)" stroke-width="0.85"/><path d="M425.0 134.2 Q424.3 131.7 422.5 129.2" stroke="rgba(150,210,255,0.80)" stroke-width="1.18"/><path d="M359.4 284.5 Q357.0 289.2 356.5 295.6" stroke="rgba(70,125,215,0.59)" stroke-width="0.70"/><path d="M379.1 328.5 Q374.6 334.0 367.2 338.1" stroke="rgba(85,150,240,0.51)" stroke-width="0.62"/><path d="M489.4 184.1 Q491.0 181.0 491.2 175.9" stroke="rgba(110,180,255,0.39)" stroke-width="1.07"/><path d="M398.8 307.0 Q397.3 310.6 395.3 314.0" stroke="rgba(150,210,255,0.59)" stroke-width="0.84"/><path d="M485.7 164.8 Q488.2 162.1 490.5 159.1" stroke="rgba(150,210,255,0.88)" stroke-width="1.03"/><path d="M532.0 218.8 Q535.1 217.2 538.0 213.7" stroke="rgba(85,150,240,0.75)" stroke-width="1.05"/><path d="M505.9 181.8 Q507.9 179.2 508.9 175.0" stroke="rgba(85,150,240,0.74)" stroke-width="0.93"/><path d="M368.4 300.3 Q364.6 305.8 360.9 311.4" stroke="rgba(70,125,215,0.39)" stroke-width="1.10"/><path d="M482.0 247.0 Q488.0 247.5 494.4 245.9" stroke="rgba(110,180,255,0.90)" stroke-width="0.67"/><path d="M462.1 240.1 Q467.0 242.3 471.5 245.7" stroke="rgba(110,180,255,0.39)" stroke-width="0.89"/><path d="M538.5 151.4 Q543.2 148.8 548.2 146.6" stroke="rgba(85,150,240,0.19)" stroke-width="1.09"/><path d="M390.4 287.8 Q388.6 292.6 387.4 297.6" stroke="rgba(85,150,240,0.58)" stroke-width="1.25"/><path d="M392.0 313.7 Q391.9 315.8 392.5 318.2" stroke="rgba(85,150,240,0.62)" stroke-width="0.79"/><path d="M496.6 294.0 Q500.7 296.5 505.7 298.1" stroke="rgba(70,125,215,0.93)" stroke-width="1.08"/><path d="M355.9 227.8 Q351.7 228.1 347.4 228.9" stroke="rgba(70,125,215,0.68)" stroke-width="0.91"/><path d="M304.6 169.1 Q298.2 167.1 290.9 166.9" stroke="rgba(70,125,215,0.42)" stroke-width="0.62"/><path d="M444.2 146.3 Q445.0 140.8 444.5 135.1" stroke="rgba(70,125,215,0.47)" stroke-width="1.08"/><path d="M417.5 165.2 Q418.5 160.2 421.1 155.1" stroke="rgba(85,150,240,0.99)" stroke-width="0.65"/><path d="M421.5 320.8 Q421.5 328.1 421.1 335.5" stroke="rgba(150,210,255,0.68)" stroke-width="0.63"/><path d="M407.7 275.3 Q407.4 280.3 408.4 285.6" stroke="rgba(70,125,215,0.91)" stroke-width="1.10"/><path d="M420.4 95.2 Q423.2 90.7 430.1 86.6" stroke="rgba(110,180,255,0.64)" stroke-width="1.01"/><path d="M375.0 141.3 Q373.3 138.6 371.4 136.0" stroke="rgba(150,210,255,0.70)" stroke-width="1.29"/><path d="M493.0 188.7 Q499.0 187.3 506.0 188.1" stroke="rgba(85,150,240,0.74)" stroke-width="1.13"/><path d="M377.7 300.2 Q373.9 306.4 369.7 312.3" stroke="rgba(85,150,240,0.42)" stroke-width="0.78"/><path d="M451.0 155.0 Q450.4 152.2 447.7 148.7" stroke="rgba(85,150,240,0.87)" stroke-width="1.15"/><path d="M389.1 193.6 Q385.7 188.5 383.4 182.5" stroke="rgba(150,210,255,0.77)" stroke-width="1.16"/><path d="M488.8 178.6 Q489.9 175.6 489.3 170.6" stroke="rgba(150,210,255,0.79)" stroke-width="0.87"/><path d="M448.7 169.9 Q450.8 167.1 453.6 164.8" stroke="rgba(70,125,215,0.47)" stroke-width="1.06"/><path d="M488.0 243.3 Q491.3 242.8 494.9 240.3" stroke="rgba(85,150,240,0.51)" stroke-width="0.87"/><path d="M489.3 198.3 Q494.0 194.9 497.8 189.6" stroke="rgba(70,125,215,0.76)" stroke-width="1.25"/><path d="M372.6 328.1 Q372.1 333.6 374.0 340.2" stroke="rgba(110,180,255,0.51)" stroke-width="0.62"/><path d="M506.3 218.6 Q510.2 217.6 514.1 215.5" stroke="rgba(85,150,240,0.45)" stroke-width="0.74"/><path d="M486.7 232.8 Q492.2 233.0 497.6 233.0" stroke="rgba(110,180,255,0.66)" stroke-width="0.65"/><path d="M457.4 185.1 Q458.2 183.0 458.2 180.1" stroke="rgba(70,125,215,0.65)" stroke-width="1.03"/><path d="M417.4 139.4 Q418.5 137.1 421.5 134.8" stroke="rgba(85,150,240,0.45)" stroke-width="1.03"/><path d="M457.6 199.1 Q460.4 197.3 463.6 195.9" stroke="rgba(110,180,255,0.44)" stroke-width="0.70"/><path d="M349.0 336.1 Q347.4 341.3 347.7 347.7" stroke="rgba(70,125,215,0.36)" stroke-width="0.68"/><path d="M445.0 306.9 Q447.9 311.8 452.5 316.0" stroke="rgba(70,125,215,0.46)" stroke-width="0.89"/><path d="M357.8 287.4 Q356.9 289.4 356.6 292.0" stroke="rgba(110,180,255,0.99)" stroke-width="0.74"/><path d="M381.1 292.5 Q379.0 293.6 375.4 293.8" stroke="rgba(70,125,215,0.73)" stroke-width="0.80"/><path d="M402.1 304.7 Q399.3 310.7 394.5 316.0" stroke="rgba(110,180,255,0.95)" stroke-width="1.24"/><path d="M491.1 246.7 Q494.7 247.0 498.5 246.3" stroke="rgba(110,180,255,0.84)" stroke-width="1.09"/><path d="M504.7 184.5 Q511.1 182.5 518.4 182.1" stroke="rgba(110,180,255,0.42)" stroke-width="1.12"/><path d="M491.6 147.4 Q494.7 144.7 498.2 142.5" stroke="rgba(150,210,255,0.97)" stroke-width="1.30"/><path d="M447.3 184.0 Q448.6 181.5 449.7 178.8" stroke="rgba(85,150,240,0.72)" stroke-width="1.14"/><path d="M354.1 256.7 Q347.7 259.9 341.4 263.7" stroke="rgba(110,180,255,0.52)" stroke-width="0.78"/><path d="M367.8 286.5 Q364.7 291.5 363.0 297.7" stroke="rgba(85,150,240,0.90)" stroke-width="0.87"/><path d="M353.6 174.9 Q349.4 170.9 345.7 166.3" stroke="rgba(70,125,215,0.77)" stroke-width="1.29"/><path d="M371.6 171.5 Q370.6 169.3 370.4 166.4" stroke="rgba(70,125,215,0.50)" stroke-width="0.72"/><path d="M370.4 239.7 Q367.0 240.4 363.6 240.8" stroke="rgba(70,125,215,0.51)" stroke-width="0.98"/><path d="M352.3 165.7 Q347.6 160.5 343.5 154.5" stroke="rgba(85,150,240,0.97)" stroke-width="1.03"/><path d="M477.5 321.8 Q478.2 324.9 477.5 328.9" stroke="rgba(150,210,255,0.72)" stroke-width="1.28"/><path d="M505.1 260.7 Q508.1 259.9 511.9 256.6" stroke="rgba(150,210,255,0.65)" stroke-width="1.08"/><path d="M323.9 198.3 Q321.5 196.9 319.5 194.8" stroke="rgba(85,150,240,0.37)" stroke-width="0.67"/><path d="M361.6 193.0 Q355.3 190.5 348.2 189.5" stroke="rgba(110,180,255,0.58)" stroke-width="1.02"/><path d="M455.3 157.2 Q458.6 152.5 463.0 148.4" stroke="rgba(85,150,240,0.92)" stroke-width="1.20"/><path d="M377.3 141.8 Q373.2 135.6 367.8 130.1" stroke="rgba(70,125,215,0.85)" stroke-width="0.93"/><path d="M487.0 232.6 Q492.3 232.9 497.6 233.4" stroke="rgba(110,180,255,0.68)" stroke-width="0.98"/><path d="M363.4 296.6 Q362.0 300.7 362.6 306.1" stroke="rgba(150,210,255,0.97)" stroke-width="0.65"/><path d="M366.1 184.5 Q360.9 179.5 356.2 173.7" stroke="rgba(70,125,215,0.95)" stroke-width="1.20"/><path d="M503.1 274.3 Q505.0 276.3 506.3 279.3" stroke="rgba(85,150,240,0.70)" stroke-width="0.91"/><path d="M328.8 186.0 Q326.5 184.2 324.6 181.6" stroke="rgba(70,125,215,0.55)" stroke-width="1.22"/><path d="M441.7 321.5 Q440.6 323.8 437.3 326.6" stroke="rgba(85,150,240,0.66)" stroke-width="0.71"/><path d="M505.9 302.5 Q510.9 304.5 517.5 304.5" stroke="rgba(85,150,240,0.57)" stroke-width="1.02"/><path d="M475.5 246.5 Q482.4 248.3 489.6 249.4" stroke="rgba(110,180,255,0.44)" stroke-width="0.68"/><path d="M488.2 244.3 Q494.7 246.8 500.8 250.8" stroke="rgba(110,180,255,0.48)" stroke-width="1.24"/><path d="M447.5 285.6 Q450.0 289.6 453.3 293.2" stroke="rgba(110,180,255,0.62)" stroke-width="0.89"/><path d="M459.0 287.6 Q460.5 289.4 462.3 291.0" stroke="rgba(110,180,255,0.95)" stroke-width="1.17"/><path d="M426.1 317.7 Q426.6 324.4 426.9 331.0" stroke="rgba(150,210,255,0.71)" stroke-width="0.77"/><path d="M343.9 202.4 Q338.4 199.5 333.5 195.3" stroke="rgba(70,125,215,0.57)" stroke-width="1.21"/><path d="M511.3 189.7 Q513.5 186.7 514.6 181.3" stroke="rgba(85,150,240,0.68)" stroke-width="0.72"/><path d="M443.5 182.3 Q445.1 178.6 446.2 174.7" stroke="rgba(85,150,240,0.46)" stroke-width="0.69"/><path d="M394.3 145.0 Q393.1 139.8 392.6 134.5" stroke="rgba(70,125,215,0.85)" stroke-width="0.88"/><path d="M378.8 172.9 Q376.8 169.4 375.3 165.5" stroke="rgba(150,210,255,0.58)" stroke-width="0.99"/><path d="M407.8 330.8 Q408.7 336.8 412.0 342.8" stroke="rgba(110,180,255,0.54)" stroke-width="0.78"/><path d="M371.5 338.6 Q369.7 345.5 369.3 353.0" stroke="rgba(110,180,255,0.56)" stroke-width="1.09"/><path d="M530.2 214.3 Q535.2 214.3 540.3 215.3" stroke="rgba(70,125,215,0.70)" stroke-width="0.76"/><path d="M469.8 179.6 Q471.6 177.0 472.7 173.7" stroke="rgba(150,210,255,0.63)" stroke-width="0.81"/><path d="M312.9 241.7 Q309.7 241.8 306.5 241.4" stroke="rgba(70,125,215,0.86)" stroke-width="0.73"/><path d="M509.9 312.6 Q515.5 314.3 523.6 313.0" stroke="rgba(70,125,215,0.57)" stroke-width="0.82"/><path d="M523.1 251.0 Q527.4 251.3 532.0 250.6" stroke="rgba(150,210,255,0.98)" stroke-width="1.04"/><path d="M423.2 147.0 Q423.8 143.2 425.2 139.4" stroke="rgba(110,180,255,0.46)" stroke-width="0.95"/><path d="M452.1 295.4 Q455.0 299.9 458.9 304.0" stroke="rgba(150,210,255,0.56)" stroke-width="1.23"/><path d="M504.2 204.3 Q508.9 204.1 514.0 205.5" stroke="rgba(85,150,240,0.79)" stroke-width="0.96"/><path d="M455.2 190.8 Q460.1 186.5 465.7 183.0" stroke="rgba(70,125,215,0.93)" stroke-width="0.66"/><path d="M480.7 306.7 Q485.8 311.9 492.0 316.3" stroke="rgba(70,125,215,0.64)" stroke-width="0.72"/><path d="M339.1 187.5 Q334.5 184.7 330.1 181.2" stroke="rgba(150,210,255,0.42)" stroke-width="1.16"/><path d="M495.6 228.5 Q502.4 227.1 509.2 223.2" stroke="rgba(85,150,240,0.52)" stroke-width="0.89"/><path d="M337.5 217.3 Q334.4 217.1 331.3 217.0" stroke="rgba(70,125,215,0.52)" stroke-width="0.67"/><path d="M481.8 300.7 Q486.7 303.3 493.9 303.6" stroke="rgba(70,125,215,0.99)" stroke-width="1.04"/><path d="M307.0 245.1 Q301.4 246.2 296.0 247.8" stroke="rgba(70,125,215,0.81)" stroke-width="1.26"/><path d="M444.5 321.2 Q443.7 324.8 440.6 328.9" stroke="rgba(70,125,215,0.94)" stroke-width="1.19"/><path d="M500.0 175.7 Q501.6 173.5 502.5 170.4" stroke="rgba(150,210,255,0.90)" stroke-width="0.91"/><path d="M358.6 245.0 Q354.1 245.7 349.5 245.6" stroke="rgba(150,210,255,0.81)" stroke-width="1.28"/><path d="M390.5 142.2 Q389.6 139.5 389.0 136.7" stroke="rgba(110,180,255,0.72)" stroke-width="0.99"/><path d="M481.0 180.4 Q483.2 176.9 484.1 171.7" stroke="rgba(110,180,255,0.50)" stroke-width="0.82"/><path d="M466.0 281.9 Q468.6 286.6 469.8 292.3" stroke="rgba(85,150,240,0.60)" stroke-width="0.73"/><path d="M393.9 268.0 Q391.7 270.2 388.6 271.7" stroke="rgba(85,150,240,0.96)" stroke-width="0.73"/><path d="M379.7 319.8 Q376.3 325.0 371.4 329.6" stroke="rgba(70,125,215,0.55)" stroke-width="0.94"/><path d="M535.8 300.8 Q543.3 302.3 552.6 300.4" stroke="rgba(150,210,255,0.33)" stroke-width="1.27"/><path d="M533.7 181.2 Q537.4 182.5 542.2 187.3" stroke="rgba(85,150,240,0.43)" stroke-width="0.68"/><path d="M405.7 268.8 Q404.4 274.4 404.1 280.3" stroke="rgba(110,180,255,0.93)" stroke-width="0.64"/><path d="M397.0 327.8 Q396.5 331.4 396.6 335.1" stroke="rgba(70,125,215,0.96)" stroke-width="0.65"/><path d="M422.1 311.4 Q423.7 314.6 427.7 317.6" stroke="rgba(70,125,215,0.38)" stroke-width="0.79"/><path d="M403.0 290.0 Q401.0 296.8 398.9 303.6" stroke="rgba(70,125,215,0.59)" stroke-width="1.07"/><path d="M387.6 281.8 Q386.9 285.4 387.8 289.9" stroke="rgba(150,210,255,0.54)" stroke-width="0.71"/><path d="M426.5 315.0 Q426.6 321.4 426.1 327.9" stroke="rgba(110,180,255,0.83)" stroke-width="0.85"/><path d="M343.9 256.0 Q341.2 255.9 338.0 254.5" stroke="rgba(70,125,215,0.71)" stroke-width="0.67"/><path d="M355.4 283.8 Q353.1 286.4 351.1 289.5" stroke="rgba(85,150,240,0.98)" stroke-width="1.07"/><path d="M366.2 241.2 Q361.2 241.6 356.1 240.7" stroke="rgba(110,180,255,0.91)" stroke-width="1.18"/><path d="M456.4 157.5 Q458.8 153.2 461.6 149.1" stroke="rgba(70,125,215,0.93)" stroke-width="0.69"/><path d="M460.9 229.9 Q464.3 230.8 467.7 232.9" stroke="rgba(110,180,255,0.84)" stroke-width="1.11"/><path d="M398.3 285.2 Q397.2 292.1 398.4 299.7" stroke="rgba(70,125,215,0.50)" stroke-width="1.22"/><path d="M434.1 144.8 Q436.0 139.1 439.2 133.7" stroke="rgba(110,180,255,0.39)" stroke-width="0.62"/><path d="M324.8 240.3 Q321.2 242.4 318.0 246.9" stroke="rgba(70,125,215,0.93)" stroke-width="0.69"/><path d="M343.6 255.1 Q341.4 256.5 339.4 258.7" stroke="rgba(70,125,215,0.62)" stroke-width="0.97"/><path d="M501.1 318.2 Q505.4 319.2 512.3 317.7" stroke="rgba(85,150,240,0.77)" stroke-width="1.10"/><path d="M454.8 331.8 Q456.0 337.6 456.1 343.7" stroke="rgba(110,180,255,0.54)" stroke-width="0.69"/><path d="M485.0 198.5 Q492.4 196.8 500.7 197.4" stroke="rgba(85,150,240,0.96)" stroke-width="0.67"/><path d="M514.4 315.1 Q518.3 318.3 522.5 321.1" stroke="rgba(70,125,215,0.41)" stroke-width="0.69"/><path d="M354.5 316.4 Q349.3 321.2 342.5 324.8" stroke="rgba(150,210,255,0.97)" stroke-width="1.12"/><path d="M474.3 290.9 Q475.5 293.7 475.8 297.3" stroke="rgba(110,180,255,0.43)" stroke-width="1.25"/><path d="M498.2 106.2 Q503.5 101.8 511.3 99.0" stroke="rgba(110,180,255,0.32)" stroke-width="1.22"/><path d="M498.3 193.9 Q502.1 192.2 506.0 190.7" stroke="rgba(110,180,255,0.84)" stroke-width="1.23"/><path d="M497.2 223.5 Q501.7 223.8 506.2 225.1" stroke="rgba(70,125,215,0.78)" stroke-width="0.86"/><path d="M334.7 125.9 Q332.2 120.1 331.8 112.8" stroke="rgba(85,150,240,0.45)" stroke-width="0.70"/><path d="M319.4 266.1 Q312.9 267.4 306.0 267.3" stroke="rgba(70,125,215,0.45)" stroke-width="1.24"/><path d="M484.6 118.8 Q488.4 113.5 492.8 108.5" stroke="rgba(110,180,255,0.35)" stroke-width="1.07"/><path d="M383.3 99.2 Q381.5 96.6 378.1 94.6" stroke="rgba(110,180,255,0.31)" stroke-width="0.84"/><path d="M493.5 263.5 Q498.0 267.3 501.4 273.3" stroke="rgba(70,125,215,0.78)" stroke-width="1.17"/><path d="M496.3 208.2 Q503.0 208.2 510.2 211.1" stroke="rgba(110,180,255,0.65)" stroke-width="1.02"/><path d="M333.1 163.5 Q328.6 162.7 322.6 164.5" stroke="rgba(150,210,255,0.77)" stroke-width="1.04"/><path d="M545.2 216.4 Q550.6 217.8 556.2 222.2" stroke="rgba(85,150,240,0.71)" stroke-width="0.92"/><path d="M486.1 178.0 Q488.8 175.2 491.0 171.9" stroke="rgba(70,125,215,1.00)" stroke-width="0.82"/><path d="M500.7 262.8 Q506.9 265.8 512.8 269.2" stroke="rgba(110,180,255,0.83)" stroke-width="0.66"/><path d="M338.4 223.0 Q333.1 222.0 327.8 220.0" stroke="rgba(150,210,255,0.72)" stroke-width="0.76"/><path d="M511.1 236.2 Q514.6 238.1 517.7 242.3" stroke="rgba(70,125,215,0.54)" stroke-width="1.20"/><path d="M359.5 177.3 Q357.2 173.5 356.2 168.2" stroke="rgba(85,150,240,0.97)" stroke-width="1.21"/><path d="M416.1 163.5 Q414.9 161.2 412.2 159.2" stroke="rgba(85,150,240,0.84)" stroke-width="1.18"/><path d="M467.2 266.6 Q470.7 268.8 474.7 270.3" stroke="rgba(110,180,255,0.98)" stroke-width="1.29"/><path d="M347.7 291.7 Q345.4 292.7 342.5 293.0" stroke="rgba(85,150,240,0.52)" stroke-width="0.72"/><path d="M377.3 240.6 Q370.2 242.6 363.0 244.3" stroke="rgba(150,210,255,0.49)" stroke-width="1.23"/><path d="M353.0 311.0 Q348.6 314.3 342.5 316.0" stroke="rgba(85,150,240,0.66)" stroke-width="0.76"/><path d="M411.4 181.3 Q411.6 178.5 412.9 175.6" stroke="rgba(70,125,215,0.85)" stroke-width="1.20"/><path d="M356.5 229.8 Q352.0 230.6 347.7 232.4" stroke="rgba(110,180,255,0.77)" stroke-width="1.25"/><path d="M369.7 125.0 Q366.3 120.1 361.9 115.8" stroke="rgba(85,150,240,0.85)" stroke-width="0.89"/><path d="M309.5 210.0 Q305.9 210.4 302.1 212.3" stroke="rgba(150,210,255,0.93)" stroke-width="0.66"/><path d="M339.6 289.6 Q338.6 292.5 339.4 297.4" stroke="rgba(70,125,215,0.99)" stroke-width="0.64"/><path d="M491.0 345.7 Q491.6 348.0 491.5 350.7" stroke="rgba(150,210,255,0.45)" stroke-width="0.79"/><path d="M533.7 295.0 Q536.0 296.8 537.9 299.2" stroke="rgba(150,210,255,0.44)" stroke-width="0.81"/><path d="M454.1 312.6 Q455.9 316.5 457.8 320.5" stroke="rgba(110,180,255,0.58)" stroke-width="0.77"/><path d="M465.8 274.5 Q470.9 278.4 477.1 281.3" stroke="rgba(70,125,215,0.54)" stroke-width="1.24"/><path d="M533.2 168.7 Q536.4 164.2 537.8 156.6" stroke="rgba(85,150,240,0.47)" stroke-width="0.65"/><path d="M382.2 356.3 Q383.4 360.8 387.9 366.0" stroke="rgba(85,150,240,0.39)" stroke-width="1.26"/><path d="M426.6 326.7 Q428.3 333.3 431.9 339.7" stroke="rgba(150,210,255,0.58)" stroke-width="0.64"/><path d="M333.2 261.3 Q327.5 264.6 322.5 269.5" stroke="rgba(150,210,255,0.61)" stroke-width="0.60"/><path d="M355.1 205.2 Q350.7 202.9 346.6 199.7" stroke="rgba(70,125,215,0.97)" stroke-width="0.76"/><path d="M440.7 291.2 Q443.4 295.6 448.0 299.3" stroke="rgba(70,125,215,0.80)" stroke-width="1.20"/><path d="M332.9 212.1 Q330.8 211.2 328.7 209.6" stroke="rgba(70,125,215,0.65)" stroke-width="1.29"/><path d="M429.2 337.8 Q427.3 343.1 421.8 348.4" stroke="rgba(70,125,215,0.51)" stroke-width="0.66"/><path d="M451.4 137.3 Q453.1 132.2 454.6 127.1" stroke="rgba(110,180,255,0.42)" stroke-width="0.70"/><path d="M458.0 270.7 Q461.6 276.0 464.1 282.3" stroke="rgba(150,210,255,0.44)" stroke-width="0.92"/><path d="M365.7 267.3 Q361.5 269.9 357.0 271.9" stroke="rgba(70,125,215,0.45)" stroke-width="1.22"/><path d="M437.9 271.6 Q440.8 277.5 444.3 283.1" stroke="rgba(70,125,215,0.48)" stroke-width="1.14"/><path d="M333.2 242.6 Q326.0 244.6 319.1 248.0" stroke="rgba(150,210,255,0.63)" stroke-width="1.13"/><path d="M495.9 158.7 Q498.5 153.6 499.0 146.5" stroke="rgba(85,150,240,0.79)" stroke-width="0.99"/><path d="M344.4 211.1 Q340.8 208.6 338.0 203.7" stroke="rgba(70,125,215,0.84)" stroke-width="1.17"/><path d="M412.9 126.2 Q410.6 121.9 405.4 118.0" stroke="rgba(70,125,215,0.86)" stroke-width="1.18"/><path d="M392.0 169.3 Q388.5 164.4 383.4 160.3" stroke="rgba(70,125,215,0.68)" stroke-width="0.68"/><path d="M494.0 286.0 Q497.1 289.4 499.4 293.6" stroke="rgba(110,180,255,0.88)" stroke-width="0.62"/><path d="M367.9 302.0 Q365.6 303.5 362.3 304.2" stroke="rgba(110,180,255,0.44)" stroke-width="0.78"/><path d="M520.9 173.3 Q526.7 168.1 530.7 164.7" stroke="rgba(120,190,255,0.55)" stroke-width="0.87"/><path d="M517.8 177.9 Q523.1 174.3 528.3 168.8" stroke="rgba(150,215,255,0.80)" stroke-width="0.72"/><path d="M521.8 170.4 Q526.9 167.0 530.2 163.2" stroke="rgba(150,215,255,0.89)" stroke-width="0.77"/><path d="M524.6 179.3 Q529.7 179.3 534.8 176.9" stroke="rgba(90,160,245,0.74)" stroke-width="0.71"/><path d="M521.1 179.4 Q523.9 174.6 529.8 173.0" stroke="rgba(120,190,255,0.71)" stroke-width="1.16"/><path d="M524.9 169.5 Q533.6 165.4 542.1 158.2" stroke="rgba(150,215,255,0.70)" stroke-width="0.76"/><path d="M527.6 177.8 Q534.2 172.0 543.0 165.7" stroke="rgba(90,160,245,0.72)" stroke-width="1.17"/><path d="M477.0 326.0 Q477.5 329.9 481.9 336.0" stroke="rgba(90,160,245,0.88)" stroke-width="0.92"/><path d="M482.0 328.6 Q484.4 337.8 487.9 349.4" stroke="rgba(120,190,255,0.57)" stroke-width="0.93"/><path d="M477.9 327.9 Q479.9 332.8 481.5 336.5" stroke="rgba(90,160,245,0.69)" stroke-width="1.09"/><path d="M477.4 336.3 Q481.0 343.6 485.9 347.7" stroke="rgba(120,190,255,0.85)" stroke-width="1.01"/><path d="M481.2 335.4 Q484.7 341.7 490.3 349.7" stroke="rgba(150,215,255,0.58)" stroke-width="1.12"/><path d="M472.2 327.7 Q472.7 333.3 476.0 335.2" stroke="rgba(90,160,245,0.83)" stroke-width="0.75"/><path d="M471.6 215.4 Q483.3 215.1 492.6 210.9" stroke="rgba(150,215,255,0.45)" stroke-width="0.83"/><path d="M472.0 215.1 Q478.1 212.9 482.7 213.4" stroke="rgba(150,215,255,0.79)" stroke-width="1.17"/><path d="M473.9 211.3 Q485.1 206.3 494.5 203.9" stroke="rgba(90,160,245,0.58)" stroke-width="1.14"/><path d="M482.3 215.1 Q489.9 212.1 495.4 207.7" stroke="rgba(90,160,245,0.64)" stroke-width="1.01"/><path d="M481.3 206.8 Q489.8 201.4 501.0 199.6" stroke="rgba(90,160,245,0.66)" stroke-width="0.93"/><path d="M473.9 204.2 Q478.0 203.3 484.0 199.6" stroke="rgba(90,160,245,0.62)" stroke-width="0.97"/><path d="M473.9 213.7 Q476.1 214.6 482.0 213.3" stroke="rgba(120,190,255,0.56)" stroke-width="1.19"/><path d="M470.6 214.3 Q475.8 211.5 482.2 211.5" stroke="rgba(120,190,255,0.53)" stroke-width="0.91"/><path d="M475.1 216.8 Q484.0 215.1 491.3 212.6" stroke="rgba(120,190,255,0.89)" stroke-width="1.15"/><path d="M470.3 211.5 Q475.7 209.2 479.2 207.1" stroke="rgba(90,160,245,0.58)" stroke-width="1.08"/><path d="M470.6 213.6 Q472.8 210.6 478.8 208.8" stroke="rgba(120,190,255,0.84)" stroke-width="0.72"/><path d="M474.5 211.6 Q483.2 208.8 489.0 206.5" stroke="rgba(150,215,255,0.69)" stroke-width="0.73"/><path d="M480.4 209.4 Q490.5 207.6 497.0 204.7" stroke="rgba(150,215,255,0.62)" stroke-width="1.06"/><path d="M470.6 208.5 Q480.6 207.4 488.6 206.0" stroke="rgba(120,190,255,0.59)" stroke-width="0.85"/><path d="M520.4 252.8 Q524.9 255.8 530.9 257.4" stroke="rgba(150,215,255,0.82)" stroke-width="0.84"/><path d="M519.2 247.2 Q529.8 250.4 539.4 251.1" stroke="rgba(120,190,255,0.86)" stroke-width="1.19"/><path d="M518.2 247.9 Q527.1 250.7 536.9 254.4" stroke="rgba(120,190,255,0.78)" stroke-width="0.85"/><path d="M525.4 256.4 Q537.6 259.2 546.8 260.3" stroke="rgba(120,190,255,0.72)" stroke-width="0.64"/><path d="M519.4 254.6 Q522.3 255.9 528.7 257.5" stroke="rgba(120,190,255,0.89)" stroke-width="1.08"/><path d="M512.4 254.3 Q518.5 256.0 523.3 255.0" stroke="rgba(150,215,255,0.57)" stroke-width="0.77"/><path d="M519.8 258.1 Q527.6 257.7 531.6 261.1" stroke="rgba(90,160,245,0.71)" stroke-width="1.14"/><path d="M521.8 260.3 Q528.9 262.7 539.1 261.7" stroke="rgba(150,215,255,0.50)" stroke-width="1.10"/><path d="M513.3 258.1 Q524.2 259.1 531.4 258.9" stroke="rgba(90,160,245,0.57)" stroke-width="0.93"/><path d="M521.1 247.1 Q533.0 250.0 541.5 251.6" stroke="rgba(90,160,245,0.48)" stroke-width="1.09"/><path d="M515.2 247.9 Q522.4 250.6 532.4 249.5" stroke="rgba(120,190,255,0.72)" stroke-width="0.83"/><path d="M522.8 252.9 Q525.2 251.6 531.5 253.1" stroke="rgba(120,190,255,0.61)" stroke-width="0.95"/><path d="M524.9 252.8 Q532.8 254.7 544.1 258.0" stroke="rgba(90,160,245,0.77)" stroke-width="0.62"/><path d="M452.2 294.0 Q459.7 302.0 466.2 310.6" stroke="rgba(90,160,245,0.54)" stroke-width="0.70"/><path d="M459.3 294.3 Q462.5 301.8 468.0 312.9" stroke="rgba(90,160,245,0.72)" stroke-width="1.09"/><path d="M463.6 298.7 Q465.6 302.6 467.5 307.6" stroke="rgba(120,190,255,0.75)" stroke-width="0.83"/><path d="M461.6 295.8 Q465.0 299.7 467.4 304.1" stroke="rgba(120,190,255,0.52)" stroke-width="0.93"/><path d="M450.8 294.2 Q458.5 303.8 464.1 311.6" stroke="rgba(120,190,255,0.48)" stroke-width="0.82"/><path d="M450.8 297.3 Q455.9 300.4 457.8 304.8" stroke="rgba(120,190,255,0.66)" stroke-width="1.07"/><path d="M451.6 291.9 Q456.9 297.5 459.9 304.0" stroke="rgba(90,160,245,0.62)" stroke-width="0.98"/><path d="M516.0 241.5 Q523.2 241.3 533.5 239.2" stroke="rgba(90,160,245,0.73)" stroke-width="1.18"/><path d="M512.8 243.6 Q516.7 245.3 522.3 246.8" stroke="rgba(90,160,245,0.69)" stroke-width="0.96"/><path d="M511.9 239.5 Q519.9 240.2 526.6 243.4" stroke="rgba(150,215,255,0.63)" stroke-width="0.80"/><path d="M504.1 235.3 Q508.5 234.9 516.3 234.5" stroke="rgba(150,215,255,0.77)" stroke-width="0.63"/><path d="M514.5 231.7 Q517.8 232.5 525.0 232.4" stroke="rgba(150,215,255,0.64)" stroke-width="1.13"/><path d="M505.3 239.4 Q513.1 240.9 523.0 239.0" stroke="rgba(120,190,255,0.76)" stroke-width="1.19"/><path d="M506.0 240.9 Q515.6 243.4 523.4 247.1" stroke="rgba(90,160,245,0.55)" stroke-width="0.86"/><path d="M419.6 118.4 Q418.4 115.0 419.7 108.6" stroke="rgba(150,215,255,0.84)" stroke-width="0.81"/><path d="M418.7 122.2 Q417.8 114.2 415.0 106.6" stroke="rgba(90,160,245,0.90)" stroke-width="0.72"/><path d="M414.9 125.9 Q416.8 115.8 414.8 109.5" stroke="rgba(90,160,245,0.80)" stroke-width="1.04"/><path d="M420.8 125.1 Q420.2 116.6 423.2 108.3" stroke="rgba(90,160,245,0.61)" stroke-width="1.07"/><path d="M420.2 125.1 Q421.3 120.9 420.6 115.1" stroke="rgba(150,215,255,0.85)" stroke-width="0.95"/><path d="M423.2 125.7 Q422.3 115.7 418.9 107.6" stroke="rgba(90,160,245,0.67)" stroke-width="1.11"/><path d="M415.2 120.3 Q418.8 113.4 419.0 102.8" stroke="rgba(150,215,255,0.50)" stroke-width="1.04"/><path d="M413.0 128.9 Q410.2 124.2 411.4 118.0" stroke="rgba(90,160,245,0.54)" stroke-width="0.65"/><path d="M412.0 130.3 Q411.3 124.9 410.3 121.8" stroke="rgba(90,160,245,0.46)" stroke-width="0.71"/><path d="M417.3 124.7 Q415.3 117.6 412.7 107.5" stroke="rgba(120,190,255,0.85)" stroke-width="0.73"/><path d="M422.0 117.6 Q419.3 115.3 419.8 109.0" stroke="rgba(120,190,255,0.83)" stroke-width="1.02"/><path d="M356.7 248.2 Q353.4 247.8 348.7 251.3" stroke="rgba(90,160,245,0.82)" stroke-width="0.89"/><path d="M353.4 250.9 Q346.0 252.0 337.3 254.4" stroke="rgba(90,160,245,0.70)" stroke-width="1.00"/><path d="M357.2 259.0 Q348.3 261.7 342.7 262.1" stroke="rgba(90,160,245,0.82)" stroke-width="0.98"/><path d="M355.9 251.6 Q346.7 254.9 338.1 257.0" stroke="rgba(120,190,255,0.47)" stroke-width="1.12"/><path d="M353.4 257.2 Q342.9 259.8 334.6 265.7" stroke="rgba(90,160,245,0.52)" stroke-width="0.72"/><path d="M353.0 253.8 Q344.6 254.5 336.4 258.6" stroke="rgba(120,190,255,0.69)" stroke-width="1.12"/><path d="M350.2 260.9 Q343.0 265.6 336.7 268.5" stroke="rgba(90,160,245,0.57)" stroke-width="0.70"/><path d="M357.4 258.4 Q354.5 261.6 348.3 262.9" stroke="rgba(150,215,255,0.52)" stroke-width="1.04"/><path d="M348.1 255.0 Q342.4 257.7 338.9 261.5" stroke="rgba(150,215,255,0.87)" stroke-width="0.62"/><path d="M353.8 254.3 Q349.6 255.5 342.8 256.4" stroke="rgba(150,215,255,0.79)" stroke-width="0.87"/><path d="M350.3 258.7 Q343.3 261.3 337.0 267.3" stroke="rgba(120,190,255,0.84)" stroke-width="1.18"/><path d="M350.0 259.8 Q346.3 260.7 342.1 262.1" stroke="rgba(90,160,245,0.56)" stroke-width="0.65"/><path d="M358.9 248.2 Q347.0 250.0 338.5 255.1" stroke="rgba(120,190,255,0.54)" stroke-width="0.92"/><path d="M375.3 291.9 Q369.2 300.6 365.9 310.9" stroke="rgba(150,215,255,0.50)" stroke-width="1.03"/><path d="M374.0 292.3 Q367.7 297.7 361.1 305.0" stroke="rgba(120,190,255,0.72)" stroke-width="0.71"/><path d="M376.3 295.0 Q371.0 303.5 366.5 308.0" stroke="rgba(120,190,255,0.63)" stroke-width="0.88"/><path d="M381.9 292.4 Q374.2 301.6 370.5 308.0" stroke="rgba(120,190,255,0.46)" stroke-width="0.86"/><path d="M380.9 289.5 Q373.5 297.6 365.5 303.3" stroke="rgba(150,215,255,0.80)" stroke-width="0.75"/><path d="M373.6 289.5 Q371.3 296.5 365.3 304.4" stroke="rgba(120,190,255,0.50)" stroke-width="1.05"/><path d="M375.6 284.3 Q372.6 290.8 368.5 300.7" stroke="rgba(90,160,245,0.90)" stroke-width="1.05"/><path d="M448.4 134.3 Q450.4 128.7 451.7 124.8" stroke="rgba(120,190,255,0.79)" stroke-width="0.74"/><path d="M448.9 129.7 Q451.2 121.0 453.6 110.3" stroke="rgba(120,190,255,0.75)" stroke-width="0.82"/><path d="M448.4 132.2 Q454.7 123.1 459.6 115.2" stroke="rgba(120,190,255,0.79)" stroke-width="1.03"/><path d="M456.8 135.6 Q459.1 127.7 461.4 116.3" stroke="rgba(90,160,245,0.87)" stroke-width="1.16"/><path d="M453.8 133.8 Q458.3 121.9 459.8 113.0" stroke="rgba(120,190,255,0.83)" stroke-width="0.82"/><path d="M450.5 131.6 Q454.1 125.1 456.0 118.6" stroke="rgba(120,190,255,0.46)" stroke-width="0.67"/><path d="M478.0 137.3 Q481.8 132.5 486.1 126.3" stroke="rgba(150,215,255,0.82)" stroke-width="0.80"/><path d="M477.9 137.8 Q480.7 132.6 483.4 129.7" stroke="rgba(120,190,255,0.55)" stroke-width="0.87"/><path d="M472.4 137.1 Q474.7 126.8 480.5 120.3" stroke="rgba(150,215,255,0.57)" stroke-width="0.89"/><path d="M474.0 138.7 Q476.5 136.0 480.2 129.6" stroke="rgba(90,160,245,0.54)" stroke-width="1.07"/><path d="M481.4 131.2 Q486.9 121.6 491.5 112.7" stroke="rgba(120,190,255,0.69)" stroke-width="0.88"/><path d="M479.8 132.3 Q480.5 124.7 484.5 121.0" stroke="rgba(150,215,255,0.84)" stroke-width="0.90"/><path d="M482.5 140.5 Q484.8 138.5 486.3 133.4" stroke="rgba(150,215,255,0.48)" stroke-width="1.04"/><path d="M472.0 139.7 Q477.5 130.1 479.2 119.0" stroke="rgba(150,215,255,0.63)" stroke-width="1.02"/><path d="M469.6 143.4 Q470.6 139.7 474.4 135.2" stroke="rgba(150,215,255,0.60)" stroke-width="1.11"/><path d="M481.3 136.6 Q484.4 127.1 490.4 118.5" stroke="rgba(150,215,255,0.77)" stroke-width="0.94"/><path d="M479.4 133.8 Q484.5 124.7 487.4 116.3" stroke="rgba(150,215,255,0.56)" stroke-width="0.90"/><path d="M477.3 130.8 Q482.0 120.5 486.5 111.5" stroke="rgba(150,215,255,0.46)" stroke-width="0.77"/><path d="M469.5 137.3 Q474.4 131.4 477.3 129.2" stroke="rgba(90,160,245,0.72)" stroke-width="1.07"/><path d="M478.5 132.6 Q479.5 128.3 482.2 122.6" stroke="rgba(150,215,255,0.84)" stroke-width="0.82"/><path d="M357.2 164.9 Q354.3 159.2 347.6 155.4" stroke="rgba(120,190,255,0.61)" stroke-width="0.82"/><path d="M362.8 162.2 Q358.7 156.0 354.8 148.8" stroke="rgba(150,215,255,0.59)" stroke-width="0.91"/><path d="M361.7 162.4 Q357.8 158.1 354.5 156.4" stroke="rgba(150,215,255,0.67)" stroke-width="0.69"/><path d="M366.5 171.9 Q358.6 165.8 350.7 158.6" stroke="rgba(150,215,255,0.78)" stroke-width="0.73"/><path d="M364.7 167.7 Q360.1 164.4 358.5 159.2" stroke="rgba(120,190,255,0.58)" stroke-width="0.87"/><path d="M358.9 166.2 Q353.4 162.3 346.6 156.9" stroke="rgba(120,190,255,0.52)" stroke-width="1.12"/><path d="M354.2 160.3 Q349.5 152.7 344.1 144.9" stroke="rgba(90,160,245,0.78)" stroke-width="1.11"/><path d="M360.7 160.8 Q357.4 156.4 354.6 150.5" stroke="rgba(90,160,245,0.84)" stroke-width="0.64"/><path d="M361.8 163.0 Q355.2 158.5 348.5 153.7" stroke="rgba(150,215,255,0.72)" stroke-width="1.01"/><path d="M352.8 170.5 Q344.9 165.8 338.9 161.3" stroke="rgba(150,215,255,0.56)" stroke-width="1.08"/><path d="M357.4 170.4 Q352.5 162.9 346.4 154.4" stroke="rgba(150,215,255,0.59)" stroke-width="0.80"/><path d="M355.9 167.3 Q348.5 160.8 343.7 157.6" stroke="rgba(120,190,255,0.54)" stroke-width="0.66"/><path d="M333.1 256.5 Q329.8 258.9 324.5 259.2" stroke="rgba(120,190,255,0.59)" stroke-width="1.12"/><path d="M328.5 250.6 Q323.5 252.0 317.3 257.2" stroke="rgba(90,160,245,0.52)" stroke-width="0.83"/><path d="M326.6 253.1 Q317.6 254.0 307.7 255.2" stroke="rgba(150,215,255,0.79)" stroke-width="0.65"/><path d="M326.3 260.9 Q318.7 265.0 313.1 265.8" stroke="rgba(150,215,255,0.58)" stroke-width="0.97"/><path d="M325.7 250.7 Q317.7 252.5 312.5 253.5" stroke="rgba(120,190,255,0.77)" stroke-width="0.96"/><path d="M337.1 262.9 Q328.2 264.4 318.3 267.3" stroke="rgba(120,190,255,0.56)" stroke-width="1.03"/><path d="M325.1 262.5 Q319.6 264.1 315.8 265.4" stroke="rgba(150,215,255,0.72)" stroke-width="1.18"/><path d="M334.9 253.7 Q326.8 258.7 322.2 260.6" stroke="rgba(120,190,255,0.46)" stroke-width="0.72"/><path d="M324.5 263.9 Q321.5 266.3 316.6 266.2" stroke="rgba(150,215,255,0.86)" stroke-width="1.14"/><path d="M444.9 118.7 Q446.5 109.6 448.0 100.5" stroke="rgba(150,215,255,0.64)" stroke-width="0.81"/><path d="M456.4 126.5 Q459.5 116.1 459.6 105.5" stroke="rgba(150,215,255,0.81)" stroke-width="0.69"/><path d="M453.2 121.0 Q455.5 115.6 457.6 111.9" stroke="rgba(120,190,255,0.82)" stroke-width="1.03"/><path d="M448.5 129.9 Q449.9 124.9 451.9 116.2" stroke="rgba(120,190,255,0.66)" stroke-width="1.01"/><path d="M445.3 129.3 Q446.6 125.1 446.0 121.2" stroke="rgba(150,215,255,0.84)" stroke-width="0.88"/><path d="M454.2 120.0 Q457.5 116.2 456.8 112.1" stroke="rgba(90,160,245,0.54)" stroke-width="0.75"/><path d="M445.5 116.7 Q447.8 106.0 446.5 99.2" stroke="rgba(90,160,245,0.68)" stroke-width="0.79"/><path d="M446.8 124.3 Q448.3 118.4 449.5 115.7" stroke="rgba(120,190,255,0.50)" stroke-width="0.95"/><path d="M456.5 130.2 Q460.0 123.7 461.3 114.5" stroke="rgba(90,160,245,0.85)" stroke-width="0.97"/><path d="M453.2 121.2 Q455.2 110.0 459.1 101.0" stroke="rgba(150,215,255,0.78)" stroke-width="0.90"/><path d="M305.4 213.8 Q299.1 214.3 295.7 214.7" stroke="rgba(90,160,245,0.58)" stroke-width="1.05"/><path d="M305.9 215.0 Q296.5 215.1 286.8 213.8" stroke="rgba(150,215,255,0.58)" stroke-width="0.72"/><path d="M312.9 212.5 Q306.5 211.0 300.8 208.5" stroke="rgba(150,215,255,0.60)" stroke-width="1.02"/><path d="M315.3 217.8 Q306.3 218.2 296.6 216.8" stroke="rgba(90,160,245,0.63)" stroke-width="0.87"/><path d="M312.7 219.0 Q306.2 218.1 299.8 217.0" stroke="rgba(150,215,255,0.66)" stroke-width="0.77"/><path d="M308.8 219.6 Q304.6 217.8 298.8 218.8" stroke="rgba(120,190,255,0.76)" stroke-width="1.16"/><path d="M316.1 222.0 Q309.6 223.1 307.1 220.5" stroke="rgba(150,215,255,0.56)" stroke-width="0.91"/><path d="M304.8 219.4 Q295.5 221.3 290.0 220.7" stroke="rgba(150,215,255,0.81)" stroke-width="0.60"/><path d="M341.1 298.5 Q335.0 302.0 329.0 305.4" stroke="rgba(120,190,255,0.54)" stroke-width="0.83"/><path d="M331.1 293.6 Q326.8 295.7 324.3 299.1" stroke="rgba(150,215,255,0.66)" stroke-width="1.06"/><path d="M339.7 303.6 Q333.5 306.9 327.1 309.8" stroke="rgba(150,215,255,0.83)" stroke-width="0.61"/><path d="M339.1 304.6 Q330.0 310.3 321.8 316.6" stroke="rgba(120,190,255,0.47)" stroke-width="1.09"/><path d="M333.5 302.7 Q328.8 304.7 326.1 307.2" stroke="rgba(90,160,245,0.59)" stroke-width="0.78"/><path d="M329.0 305.5 Q323.2 309.0 313.5 313.2" stroke="rgba(90,160,245,0.49)" stroke-width="0.90"/><path d="M333.3 301.6 Q327.5 307.3 319.6 309.5" stroke="rgba(90,160,245,0.86)" stroke-width="0.74"/><path d="M333.3 302.1 Q328.5 303.9 322.1 308.2" stroke="rgba(120,190,255,0.67)" stroke-width="0.84"/><path d="M333.5 299.2 Q330.3 302.7 327.8 305.0" stroke="rgba(90,160,245,0.55)" stroke-width="0.81"/><path d="M332.1 300.3 Q327.6 302.9 324.4 308.3" stroke="rgba(150,215,255,0.66)" stroke-width="0.99"/><path d="M342.0 301.5 Q335.2 306.4 328.4 308.2" stroke="rgba(150,215,255,0.63)" stroke-width="1.05"/><path d="M332.4 304.4 Q327.3 307.7 321.8 312.0" stroke="rgba(90,160,245,0.77)" stroke-width="0.85"/><path d="M329.8 294.0 Q319.2 300.3 311.9 304.0" stroke="rgba(90,160,245,0.54)" stroke-width="1.16"/><path d="M334.8 293.1 Q329.5 300.9 325.4 304.7" stroke="rgba(120,190,255,0.68)" stroke-width="1.10"/><path d="M381.7 151.6 Q375.4 142.1 370.5 136.0" stroke="rgba(90,160,245,0.56)" stroke-width="0.71"/><path d="M385.7 152.5 Q381.6 144.1 375.4 136.9" stroke="rgba(90,160,245,0.60)" stroke-width="0.90"/><path d="M374.3 155.3 Q372.5 148.2 367.9 137.7" stroke="rgba(150,215,255,0.86)" stroke-width="0.70"/><path d="M382.8 154.8 Q374.8 146.7 370.5 139.9" stroke="rgba(90,160,245,0.61)" stroke-width="0.67"/><path d="M378.6 155.0 Q376.6 150.3 374.6 146.2" stroke="rgba(90,160,245,0.77)" stroke-width="0.73"/><path d="M381.8 146.8 Q379.9 137.7 375.7 130.4" stroke="rgba(150,215,255,0.59)" stroke-width="0.81"/><path d="M481.4 219.2 Q487.0 219.6 494.2 217.4" stroke="rgba(90,160,245,0.53)" stroke-width="0.96"/><path d="M477.7 209.7 Q483.5 210.2 492.8 210.0" stroke="rgba(150,215,255,0.50)" stroke-width="0.93"/><path d="M481.6 210.1 Q488.2 209.1 497.7 206.7" stroke="rgba(120,190,255,0.55)" stroke-width="0.89"/><path d="M479.5 213.8 Q489.4 212.4 500.4 212.4" stroke="rgba(150,215,255,0.89)" stroke-width="0.78"/><path d="M479.1 216.8 Q486.7 214.8 493.8 212.0" stroke="rgba(150,215,255,0.65)" stroke-width="1.12"/><path d="M475.4 210.6 Q482.4 211.5 490.0 210.3" stroke="rgba(150,215,255,0.52)" stroke-width="0.82"/><path d="M482.9 217.4 Q488.2 214.3 493.9 213.5" stroke="rgba(150,215,255,0.71)" stroke-width="0.82"/><path d="M477.9 213.5 Q486.7 212.3 498.1 210.4" stroke="rgba(120,190,255,0.65)" stroke-width="0.84"/><path d="M433.1 327.5 Q434.6 331.7 434.7 338.8" stroke="rgba(150,215,255,0.71)" stroke-width="0.69"/><path d="M421.0 327.5 Q421.7 339.1 423.1 348.0" stroke="rgba(120,190,255,0.74)" stroke-width="0.71"/><path d="M427.3 329.0 Q426.7 336.0 429.5 339.1" stroke="rgba(120,190,255,0.48)" stroke-width="0.93"/><path d="M420.4 325.2 Q420.9 337.0 421.4 346.0" stroke="rgba(120,190,255,0.46)" stroke-width="0.85"/><path d="M420.9 332.3 Q420.4 343.1 420.5 352.2" stroke="rgba(150,215,255,0.46)" stroke-width="0.96"/><path d="M419.8 319.1 Q418.1 328.9 416.5 339.8" stroke="rgba(150,215,255,0.62)" stroke-width="0.71"/><path d="M421.9 322.6 Q423.0 328.8 420.8 335.1" stroke="rgba(120,190,255,0.48)" stroke-width="1.07"/><path d="M425.8 319.4 Q428.6 329.7 429.5 336.8" stroke="rgba(90,160,245,0.83)" stroke-width="0.88"/><path d="M427.3 331.3 Q427.3 343.0 426.6 352.9" stroke="rgba(90,160,245,0.74)" stroke-width="0.92"/><path d="M428.5 332.0 Q429.5 335.4 430.7 339.6" stroke="rgba(120,190,255,0.89)" stroke-width="1.04"/><path d="M426.1 320.1 Q428.6 324.6 428.5 331.6" stroke="rgba(90,160,245,0.61)" stroke-width="0.65"/><path d="M421.8 327.0 Q422.6 335.2 421.9 341.0" stroke="rgba(120,190,255,0.47)" stroke-width="0.72"/><path d="M427.5 326.9 Q426.8 333.2 429.1 335.7" stroke="rgba(120,190,255,0.75)" stroke-width="1.17"/><path d="M433.4 146.8 Q432.0 138.4 432.3 133.1" stroke="rgba(150,215,255,0.82)" stroke-width="0.92"/><path d="M432.7 149.1 Q433.4 143.0 432.7 133.4" stroke="rgba(120,190,255,0.71)" stroke-width="1.01"/><path d="M437.5 159.5 Q438.6 153.1 438.9 144.2" stroke="rgba(150,215,255,0.71)" stroke-width="0.85"/><path d="M425.5 148.4 Q429.4 139.0 429.8 129.1" stroke="rgba(90,160,245,0.60)" stroke-width="0.75"/><path d="M429.7 156.5 Q430.0 147.9 431.2 137.3" stroke="rgba(150,215,255,0.79)" stroke-width="1.12"/><path d="M434.9 154.4 Q435.0 148.1 438.7 145.6" stroke="rgba(90,160,245,0.70)" stroke-width="1.09"/><path d="M427.6 158.1 Q428.3 152.4 427.6 148.2" stroke="rgba(150,215,255,0.60)" stroke-width="0.93"/><path d="M433.9 150.5 Q435.6 140.1 439.3 129.2" stroke="rgba(150,215,255,0.49)" stroke-width="1.14"/><path d="M430.2 157.9 Q429.0 147.9 430.3 141.2" stroke="rgba(150,215,255,0.68)" stroke-width="0.67"/><path d="M436.2 156.8 Q439.0 150.7 439.6 144.5" stroke="rgba(120,190,255,0.51)" stroke-width="0.81"/><path d="M429.2 151.8 Q429.5 141.2 429.1 132.0" stroke="rgba(120,190,255,0.66)" stroke-width="0.96"/><path d="M427.7 156.7 Q428.8 150.4 427.0 145.0" stroke="rgba(90,160,245,0.58)" stroke-width="0.69"/><path d="M436.2 149.9 Q438.5 141.9 442.4 132.8" stroke="rgba(120,190,255,0.52)" stroke-width="1.10"/><path d="M476.6 182.4 Q485.9 178.9 494.0 174.9" stroke="rgba(90,160,245,0.62)" stroke-width="0.73"/><path d="M478.9 181.5 Q483.9 178.8 486.1 175.0" stroke="rgba(90,160,245,0.49)" stroke-width="1.18"/><path d="M487.5 180.4 Q495.9 176.7 503.4 170.4" stroke="rgba(90,160,245,0.74)" stroke-width="0.96"/><path d="M481.8 175.9 Q488.4 168.7 495.6 164.9" stroke="rgba(90,160,245,0.68)" stroke-width="0.61"/><path d="M479.0 182.2 Q481.5 180.1 484.7 176.7" stroke="rgba(90,160,245,0.69)" stroke-width="0.77"/><path d="M480.0 181.3 Q485.5 177.7 487.6 173.4" stroke="rgba(90,160,245,0.86)" stroke-width="1.04"/><path d="M488.0 184.4 Q497.0 181.0 503.5 176.2" stroke="rgba(150,215,255,0.75)" stroke-width="1.16"/><path d="M369.1 231.2 Q362.3 230.6 355.5 230.4" stroke="rgba(120,190,255,0.48)" stroke-width="1.18"/><path d="M367.0 236.1 Q359.1 236.0 347.9 235.3" stroke="rgba(150,215,255,0.59)" stroke-width="0.71"/><path d="M362.3 231.9 Q360.1 230.1 354.0 230.9" stroke="rgba(90,160,245,0.52)" stroke-width="0.92"/><path d="M368.6 236.1 Q360.7 239.6 348.8 240.4" stroke="rgba(150,215,255,0.50)" stroke-width="0.78"/><path d="M363.4 229.2 Q355.6 227.4 348.2 226.6" stroke="rgba(120,190,255,0.65)" stroke-width="1.13"/><path d="M357.3 232.6 Q349.0 229.6 343.1 229.3" stroke="rgba(150,215,255,0.70)" stroke-width="0.84"/><path d="M368.0 228.8 Q361.8 227.2 355.9 228.1" stroke="rgba(120,190,255,0.57)" stroke-width="0.86"/><path d="M357.5 227.2 Q351.9 227.5 344.8 230.6" stroke="rgba(150,215,255,0.52)" stroke-width="0.72"/><path d="M362.7 225.4 Q355.0 226.4 350.3 225.3" stroke="rgba(90,160,245,0.72)" stroke-width="1.09"/><path d="M368.6 224.6 Q360.5 221.6 356.1 222.2" stroke="rgba(150,215,255,0.58)" stroke-width="0.95"/><path d="M363.6 224.6 Q353.9 226.2 345.8 226.6" stroke="rgba(150,215,255,0.50)" stroke-width="0.64"/><path d="M357.9 231.6 Q351.6 230.4 344.0 230.8" stroke="rgba(90,160,245,0.54)" stroke-width="0.63"/><path d="M426.4 126.5 Q429.4 119.4 428.6 115.4" stroke="rgba(120,190,255,0.89)" stroke-width="0.62"/><path d="M434.2 118.5 Q436.6 106.0 438.2 97.2" stroke="rgba(90,160,245,0.72)" stroke-width="0.67"/><path d="M431.0 128.9 Q433.3 122.0 433.0 113.1" stroke="rgba(150,215,255,0.64)" stroke-width="1.18"/><path d="M435.5 119.8 Q435.4 110.3 437.4 104.8" stroke="rgba(120,190,255,0.78)" stroke-width="0.70"/><path d="M433.8 125.6 Q433.9 114.4 434.2 105.7" stroke="rgba(90,160,245,0.64)" stroke-width="0.76"/><path d="M428.6 119.5 Q428.4 112.8 428.0 109.3" stroke="rgba(120,190,255,0.82)" stroke-width="1.08"/><path d="M425.7 127.1 Q426.6 118.7 427.5 107.9" stroke="rgba(90,160,245,0.70)" stroke-width="1.08"/><path d="M373.0 135.1 Q369.5 129.2 365.1 122.1" stroke="rgba(150,215,255,0.72)" stroke-width="0.69"/><path d="M378.9 128.7 Q375.6 117.6 370.9 109.5" stroke="rgba(120,190,255,0.81)" stroke-width="0.72"/><path d="M370.7 134.4 Q368.9 131.3 368.2 125.9" stroke="rgba(150,215,255,0.58)" stroke-width="0.94"/><path d="M369.0 128.1 Q367.8 124.9 366.3 119.7" stroke="rgba(150,215,255,0.85)" stroke-width="0.84"/><path d="M374.0 128.5 Q370.4 124.2 369.6 120.5" stroke="rgba(90,160,245,0.45)" stroke-width="0.98"/><path d="M371.5 140.5 Q368.0 130.0 367.0 122.0" stroke="rgba(120,190,255,0.58)" stroke-width="0.62"/><path d="M521.3 237.1 Q530.6 238.0 542.9 234.9" stroke="rgba(90,160,245,0.84)" stroke-width="0.64"/><path d="M515.9 232.5 Q523.0 232.3 532.8 235.4" stroke="rgba(150,215,255,0.47)" stroke-width="0.89"/><path d="M513.8 245.1 Q516.5 244.6 522.7 245.5" stroke="rgba(90,160,245,0.78)" stroke-width="1.14"/><path d="M517.1 241.8 Q525.7 240.9 536.2 240.7" stroke="rgba(150,215,255,0.47)" stroke-width="0.92"/><path d="M515.1 236.9 Q523.0 240.7 531.3 242.9" stroke="rgba(120,190,255,0.47)" stroke-width="1.17"/><path d="M521.8 234.9 Q529.2 233.6 532.7 235.6" stroke="rgba(120,190,255,0.48)" stroke-width="0.89"/><path d="M519.2 239.8 Q525.6 239.0 529.0 240.5" stroke="rgba(150,215,255,0.84)" stroke-width="0.89"/><path d="M516.5 231.8 Q524.0 231.4 533.9 229.5" stroke="rgba(120,190,255,0.68)" stroke-width="0.77"/><path d="M363.6 304.8 Q359.8 309.2 358.2 314.1" stroke="rgba(150,215,255,0.64)" stroke-width="0.99"/><path d="M357.4 299.6 Q350.2 307.8 341.3 314.5" stroke="rgba(120,190,255,0.58)" stroke-width="1.02"/><path d="M360.4 307.6 Q358.4 312.1 356.3 314.8" stroke="rgba(120,190,255,0.77)" stroke-width="0.80"/><path d="M352.9 297.9 Q348.8 306.2 342.2 313.8" stroke="rgba(90,160,245,0.48)" stroke-width="0.63"/><path d="M351.6 310.4 Q347.3 316.8 341.2 325.4" stroke="rgba(150,215,255,0.89)" stroke-width="0.70"/><path d="M353.6 297.3 Q350.1 303.0 346.6 306.2" stroke="rgba(150,215,255,0.89)" stroke-width="0.94"/><path d="M360.0 300.9 Q356.4 304.4 354.4 308.8" stroke="rgba(150,215,255,0.61)" stroke-width="0.64"/><path d="M354.2 309.3 Q349.4 317.4 344.3 325.7" stroke="rgba(150,215,255,0.60)" stroke-width="1.11"/><path d="M353.5 302.9 Q348.2 310.6 343.4 318.6" stroke="rgba(90,160,245,0.71)" stroke-width="0.62"/></g></svg><div class="abs" style="left:17.7px;top:16.1px;width:809.6px;height:442.3px;border:2.2px solid #8e8e8e;border-radius:8px"></div></div>
<div class="abs t" style="left:729.88px;top:249.02px;font-size:24.56px;font-weight:400;color:#fff;letter-spacing:10.143855888898983px;">LOREM</div>
<div class="abs t" style="left:878.93px;top:249.02px;font-size:24.56px;font-weight:400;color:#fff;letter-spacing:10.846533061182779px;">IPSUM</div>
<div class="abs t" style="left:684.06px;top:272.45px;font-size:101.45px;font-weight:400;color:#fff;letter-spacing:0px;transform:scaleX(0.8709);transform-origin:0 0;">YOUTUBE</div>
<div class="abs t" style="left:634.84px;top:365.35px;font-size:101.45px;font-weight:400;color:#fff;letter-spacing:0px;transform:scaleX(0.9464);transform-origin:0 0;">THUMBNAIL</div>
<div class="abs" style="left:763.5px;top:477.1px;width:208.5px;height:34px;background:#fff"></div>
<div class="abs t" style="left:776.15px;top:483.47px;font-size:24.71px;font-weight:400;color:#111;letter-spacing:4.500017884720201px;">TEMPLATES</div>
<svg style="left:0;top:0" width="1320" height="735"><g stroke="#1ab5ea" stroke-width="1" fill="none" stroke-dasharray="4 3"><rect x="681" y="270.9" width="431.4" height="111.6"/></g><path d="M896.6 240 V270.9" stroke="#1ab5ea" stroke-width="1.5"/><g fill="#16b4ec" stroke="rgba(220,235,245,.55)" stroke-width="0.8"><circle cx="681" cy="270.9" r="7.1"/><circle cx="1112.4" cy="270.9" r="7.1"/><circle cx="681" cy="382.5" r="7.1"/><circle cx="1112.4" cy="382.5" r="7.1"/><circle cx="896.6" cy="232.3" r="7.3"/></g></svg>
<div class="abs" style="left:745.1px;top:673px;width:242.6px;height:42.5px;background:#0f1938;border-radius:5px"></div>
<div class="abs" style="left:749.8px;top:677.8px;width:72.2px;height:33px;background:#394268;border-radius:5px;overflow:hidden"><div class="abs" style="left:0;top:0;width:34.8px;height:33px;background:#4a9af9"></div></div>
<div class="abs" style="left:831.8px;top:677.8px;width:151px;height:33px;background:#394268;border-radius:5px"></div>
<div class="abs" style="left:870.2px;top:677.8px;width:1.2px;height:33px;background:#c9cbd6"></div>
<svg style="left:0;top:0" width="1000" height="735"><g fill="#fff"><rect x="755.9" y="682.5" width="10.7" height="11"/><rect x="768.2" y="682.5" width="10.7" height="11"/><rect x="755.9" y="695" width="10.7" height="11"/><rect x="768.2" y="695" width="10.7" height="11"/></g><g fill="none" stroke="#e6e7ee" stroke-width="1.2"><path d="M792.4 699.2 L806.6 684.2 L814.6 692.4 L803 704.1 H797.2 Z" stroke-linejoin="round"/><path d="M797.9 693.6 L805.4 701.6"/><path d="M803 704.1 H814.8"/><path d="M842.6 686.8 V697.2 H859.4 V686.8"/><path d="M841 686.6 H860.6" stroke-width="1.6"/><path d="M850.9 697.4 V702.4" stroke-width="1.6"/><path d="M850.9 698.6 L844.6 702.9 M850.9 698.6 L857.4 702.9"/></g><g fill="#fff"><rect x="887.1" y="692.4" width="11.3" height="2"/><rect x="956" y="692.4" width="11.3" height="1.5"/><rect x="960.9" y="687.2" width="1.5" height="12.3"/></g></svg>
<div class="abs t" style="left:911.73px;top:685.13px;font-size:14.53px;font-weight:400;color:#fff;letter-spacing:0px;transform:scaleX(0.9067);transform-origin:0 0;-webkit-text-stroke:0.35px #fff;">68 %</div>
<div class="abs" style="left:1320px;top:58px;width:216px;height:677px;background:#394268"></div>
<div class="abs" style="left:1440px;top:58px;width:96px;height:63.3px;background:#0f1938"></div>
<div class="abs" style="left:1320px;top:58px;width:120px;height:1px;background:#2cc01e"></div>
<div class="abs" style="left:1348.2px;top:131.1px;width:33.5px;height:33.3px;background:#0f1938;border-radius:4px"></div>
<div class="abs" style="left:1419.0px;top:131.1px;width:33.5px;height:33.3px;background:#0f1938;border-radius:4px"></div>
<div class="abs" style="left:1490.4px;top:131.1px;width:33.5px;height:33.3px;background:#0f1938;border-radius:4px"></div>
<div class="abs" style="left:1320px;top:175px;width:216px;height:147px;background:#2b3151"></div>
<div class="abs" style="left:1320px;top:289px;width:216px;height:33px;background:#272c4a"></div>
<div class="abs" style="left:1524px;top:271.5px;width:20px;height:12px;background:#141b36;border-radius:6px"></div>
<div class="abs" style="left:1514px;top:271.4px;width:13.2px;height:13.2px;background:#14a5e6;border-radius:50%"></div>
<svg style="left:0;top:0" width="1536" height="735"><g fill="#fff"><path d="M1335 185.5 H1344 L1339.5 190.8 Z"/><path d="M1335 214.2 H1344 L1339.5 219.5 Z"/><path d="M1335 243 H1344 L1339.5 248.3 Z"/><path d="M1335 308.5 H1344 L1339.5 303.2 Z"/></g><rect x="1322.8" y="61.8" width="114.3" height="57.1" fill="none" stroke="#fe0000" stroke-width="5.6"/><rect x="1320.5" y="286" width="209" height="36.2" rx="1" fill="none" stroke="#fe0000" stroke-width="7"/><g fill="none" stroke="#e9eaf0" stroke-width="1.3"><path d="M1375.2 88 Q1372.5 80 1375.6 75.8 Q1378 71.5 1381.1 69.8 Q1385 71.5 1387.6 75.7"/><path d="M1367.7 82.1 L1375.6 75.8"/><circle cx="1375.2" cy="88.4" r="1.4" fill="#394268"/><circle cx="1367.7" cy="82.1" r="1.4" fill="#394268"/><circle cx="1375.6" cy="75.8" r="1.4" fill="#394268"/><circle cx="1381.1" cy="69.7" r="1.4" fill="#394268"/><circle cx="1387.6" cy="75.7" r="1.4" fill="#394268"/><path d="M1494.5 68.3 L1505.5 74 L1494.5 79.5 L1483.5 74 Z"/><path d="M1486.6 76.9 L1483.5 78.7 L1494.5 84.6 L1505.5 78.7 L1502.4 76.9"/><path d="M1486.6 82.2 L1483.5 84 L1494.5 90.2 L1505.5 84 L1502.4 82.2"/></g><g fill="none" stroke="#eef0f5" stroke-width="1.3"><rect x="1356.3" y="138.7" width="15.5" height="5.2" rx="2.2"/><path d="M1371.8 141.3 H1373 Q1374 141.3 1374 142.3 V146.5 Q1374 147.5 1373 147.5 H1364.5 V150.3"/><rect x="1362.6" y="150.3" width="3.4" height="8" rx="1.6"/><path d="M1429 140.3 H1438 L1441.3 143.6 V157 H1429 Z"/><path d="M1430.3 158.8 H1443.6 V143.8"/><path d="M1498.6 143.3 H1515.6"/><path d="M1503.8 143 V140.4 H1510.5 V143"/><path d="M1500 143.5 L1501.6 158.8 H1512.6 L1514.2 143.5"/><path d="M1504.3 147 V155.8 M1507.1 147 V155.8 M1509.9 147 V155.8" stroke-width="1.1"/></g><g fill="#0f1938"><rect x="1425.1" y="330" width="77.8" height="24.1"/><rect x="1419.8" y="380.2" width="86.7" height="18.3" rx="3"/><rect x="1419.8" y="422.7" width="86.7" height="19" rx="3"/><rect x="1419.8" y="465.2" width="86.7" height="18.9" rx="3"/></g><rect x="1512.9" y="330.4" width="30" height="23.4" fill="#0c54ff" stroke="#d6dbe8" stroke-width="1"/><g stroke-width="2"><path d="M1396 410.5 H1536" stroke="#fff" stroke-width="1.6"/><path d="M1396.5 453.1 H1469" stroke="#5ba3f3" stroke-width="1.6"/><path d="M1469 453.1 H1536" stroke="#fff" stroke-width="1.6"/><path d="M1396.5 496.2 H1469" stroke="#5ba3f3" stroke-width="1.6"/><path d="M1469 496.2 H1536" stroke="#fff" stroke-width="1.6"/></g><circle cx="1396.2" cy="410.5" r="6" fill="#5ea4f4"/><circle cx="1469" cy="453.1" r="6" fill="#5ea4f4" stroke="#fff" stroke-width="1.8"/><circle cx="1469" cy="496.2" r="6" fill="#5ea4f4" stroke="#fff" stroke-width="1.8"/><path d="M1503.4 656 H1528.8 Q1532.8 656 1532.8 660 V685.4 A29.4 29.4 0 1 1 1503.4 656 Z" fill="#2176de" style="filter:drop-shadow(0 3px 3px rgba(0,0,0,.3))"/><rect x="1493.2" y="679" width="23.6" height="16" rx="5" fill="#fff"/><path d="M1497.5 684.8 H1512.5 M1497.5 689.8 H1505.5" stroke="#2176de" stroke-width="1.8" stroke-linecap="round"/></svg>
<div class="abs t" style="left:1358.19px;top:98.13px;font-size:13.52px;font-weight:400;color:#fff;letter-spacing:0px;transform:scaleX(1.0948);transform-origin:0 0;-webkit-text-stroke:0.25px #fff;">Editor</div>
<div class="abs t" style="left:1475.69px;top:98.13px;font-size:13.52px;font-weight:400;color:#fff;letter-spacing:0px;transform:scaleX(1.0929);transform-origin:0 0;-webkit-text-stroke:0.25px #fff;">Layer</div>
<div class="abs t" style="left:1352.03px;top:183.05px;font-size:13.60px;font-weight:400;color:#eef0f6;letter-spacing:0px;transform:scaleX(1.0444);transform-origin:0 0;-webkit-text-stroke:0.30px #eef0f6;">Position/Rotation</div>
<div class="abs t" style="left:1352.89px;top:211.75px;font-size:13.60px;font-weight:400;color:#eef0f6;letter-spacing:0px;transform:scaleX(1.0121);transform-origin:0 0;-webkit-text-stroke:0.30px #eef0f6;">Text Settings</div>
<div class="abs t" style="left:1352.50px;top:240.45px;font-size:13.60px;font-weight:400;color:#eef0f6;letter-spacing:0px;transform:scaleX(1.0153);transform-origin:0 0;-webkit-text-stroke:0.30px #eef0f6;">Color/Gradients</div>
<div class="abs t" style="left:1353.17px;top:270.05px;font-size:13.60px;font-weight:400;color:#eef0f6;letter-spacing:0px;transform:scaleX(1.0154);transform-origin:0 0;-webkit-text-stroke:0.30px #eef0f6;">Arc Text</div>
<div class="abs t" style="left:1352.59px;top:299.45px;font-size:13.60px;font-weight:400;color:#eef0f6;letter-spacing:0px;transform:scaleX(0.9884);transform-origin:0 0;-webkit-text-stroke:0.30px #eef0f6;">Shadow</div>
<div class="abs t" style="left:1328.58px;top:332.32px;font-size:13.50px;font-weight:400;color:#eef0f6;letter-spacing:0px;transform:scaleX(1.0071);transform-origin:0 0;-webkit-text-stroke:0.30px #eef0f6;">Shadow Color :</div>
<div class="abs t" style="left:1441.74px;top:335.35px;font-size:13.00px;font-weight:400;color:#fff;letter-spacing:0px;transform:scaleX(1.0468);transform-origin:0 0;-webkit-text-stroke:0.30px #fff;">#0c54ff</div>
<div class="abs t" style="left:1329.69px;top:382.12px;font-size:13.20px;font-weight:400;color:#eef0f6;letter-spacing:0px;transform:scaleX(1.0252);transform-origin:0 0;-webkit-text-stroke:0.30px #eef0f6;">Shadow Blur :</div>
<div class="abs t" style="left:1329.59px;top:424.42px;font-size:13.20px;font-weight:400;color:#eef0f6;letter-spacing:0px;transform:scaleX(1.0121);transform-origin:0 0;-webkit-text-stroke:0.30px #eef0f6;">Shadow X :</div>
<div class="abs t" style="left:1329.60px;top:466.92px;font-size:13.20px;font-weight:400;color:#eef0f6;letter-spacing:0px;transform:scaleX(1.0042);transform-origin:0 0;-webkit-text-stroke:0.30px #eef0f6;">Shadow Y :</div>
<div class="abs t" style="left:1458.59px;top:383.05px;font-size:13.00px;font-weight:400;color:#fff;letter-spacing:0px;transform:scaleX(1.2069);transform-origin:0 0;-webkit-text-stroke:0.30px #fff;">0</div>
<div class="abs" style="left:1427.6px;top:390.5px;width:3.6px;height:1.3px;background:#fff"></div>
<div class="abs" style="left:1494.9px;top:390.2px;width:5px;height:1.2px;background:#fff"></div>
<div class="abs" style="left:1496.8px;top:388.3px;width:1.2px;height:5px;background:#fff"></div>
<div class="abs t" style="left:1458.59px;top:425.85px;font-size:13.00px;font-weight:400;color:#fff;letter-spacing:0px;transform:scaleX(1.2069);transform-origin:0 0;-webkit-text-stroke:0.30px #fff;">0</div>
<div class="abs" style="left:1427.6px;top:433.3px;width:3.6px;height:1.3px;background:#fff"></div>
<div class="abs" style="left:1494.9px;top:433.0px;width:5px;height:1.2px;background:#fff"></div>
<div class="abs" style="left:1496.8px;top:431.1px;width:1.2px;height:5px;background:#fff"></div>
<div class="abs t" style="left:1458.59px;top:468.35px;font-size:13.00px;font-weight:400;color:#fff;letter-spacing:0px;transform:scaleX(1.2069);transform-origin:0 0;-webkit-text-stroke:0.30px #fff;">0</div>
<div class="abs" style="left:1427.6px;top:475.8px;width:3.6px;height:1.3px;background:#fff"></div>
<div class="abs" style="left:1494.9px;top:475.5px;width:5px;height:1.2px;background:#fff"></div>
<div class="abs" style="left:1496.8px;top:473.6px;width:1.2px;height:5px;background:#fff"></div>
</body></html>
